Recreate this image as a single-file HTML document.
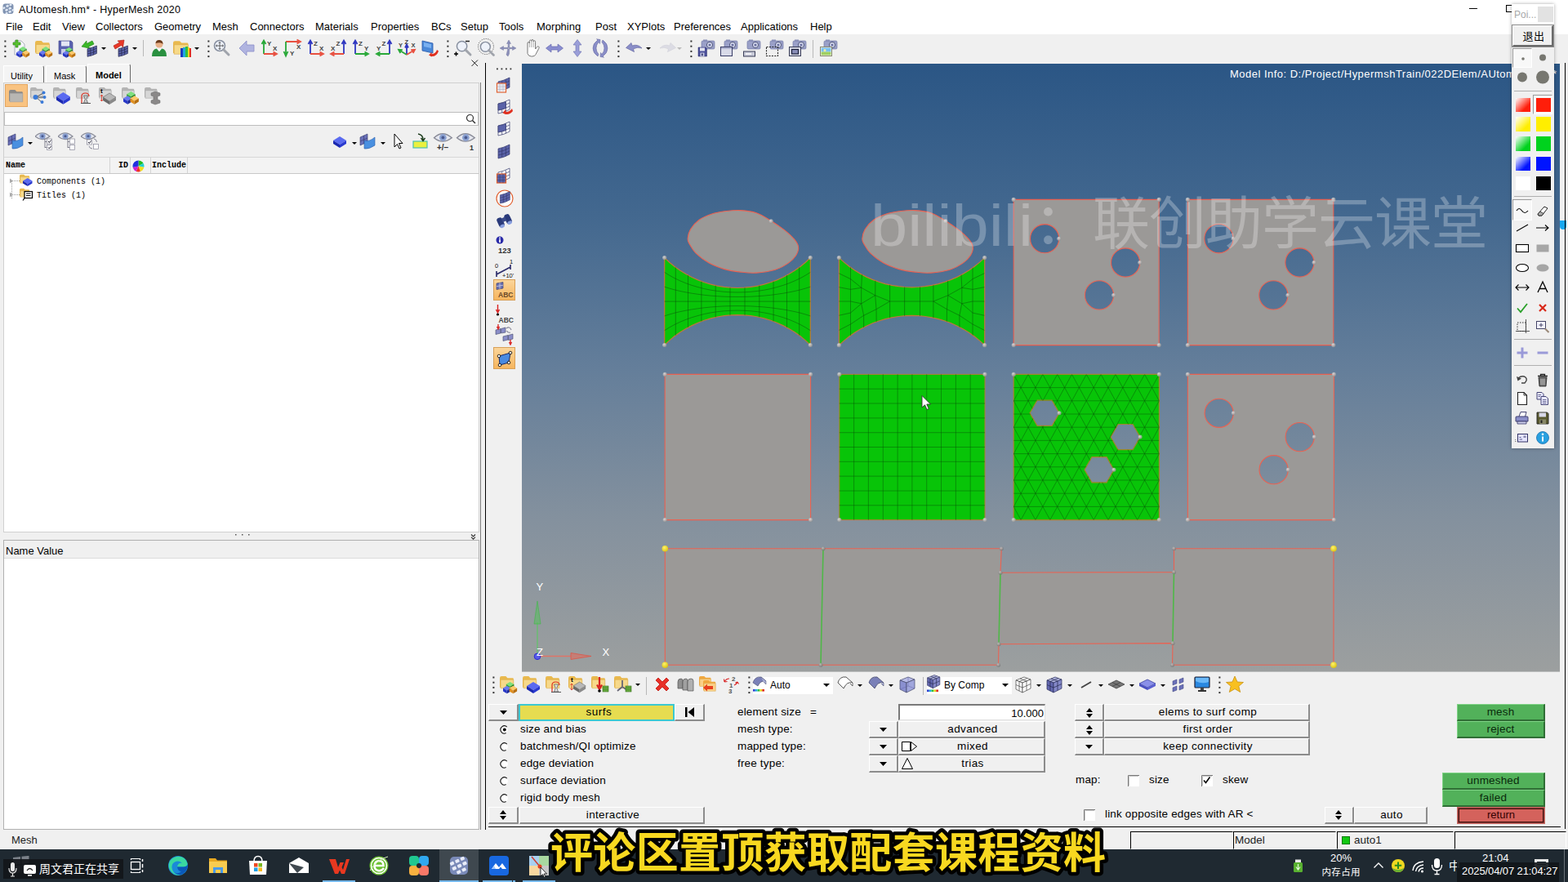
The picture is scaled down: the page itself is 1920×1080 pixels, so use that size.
<!DOCTYPE html>
<html><head><meta charset="utf-8"><title>HyperMesh</title>
<style>
html,body{margin:0;padding:0}
body{width:1920px;height:1080px;position:relative;overflow:hidden;background:#f0f0f0;font-family:"Liberation Sans",sans-serif;font-size:13px;color:#000}
div,svg{position:absolute;box-sizing:border-box}
.t{white-space:nowrap;line-height:1}
.btn{background:#f0f0f0;border-top:1px solid #fff;border-left:1px solid #fff;border-right:2px solid #8c8c8c;border-bottom:2px solid #8c8c8c;text-align:center;font-size:13.5px;letter-spacing:0.35px;line-height:17px;white-space:nowrap;padding-left:3px}
.gbtn{background:#52b15a;border-top:1px solid #7fd486;border-left:1px solid #7fd486;border-right:2px solid #2f6e35;border-bottom:2px solid #2f6e35;text-align:center;font-size:13.5px;letter-spacing:0.17px;line-height:17.5px;color:#0a2a0c;white-space:nowrap}
.mono{font-family:"Liberation Mono",monospace}
</style></head><body>
<div style="left:0px;top:0px;width:1920px;height:42px;background:#fff"></div>
<div style="left:0px;top:42px;width:1920px;height:36px;background:#f0f0f0"></div>
<div class="t" style="left:23px;top:6px;font-size:12.5px;color:#000;letter-spacing:0.27px">AUtomesh.hm* - HyperMesh 2020</div>
<div class="t" style="left:7px;top:26px;font-size:13px;color:#000;">File</div>
<div class="t" style="left:40px;top:26px;font-size:13px;color:#000;">Edit</div>
<div class="t" style="left:76px;top:26px;font-size:13px;color:#000;">View</div>
<div class="t" style="left:117px;top:26px;font-size:13px;color:#000;">Collectors</div>
<div class="t" style="left:189px;top:26px;font-size:13px;color:#000;">Geometry</div>
<div class="t" style="left:260px;top:26px;font-size:13px;color:#000;">Mesh</div>
<div class="t" style="left:306px;top:26px;font-size:13px;color:#000;">Connectors</div>
<div class="t" style="left:386px;top:26px;font-size:13px;color:#000;">Materials</div>
<div class="t" style="left:454px;top:26px;font-size:13px;color:#000;">Properties</div>
<div class="t" style="left:528px;top:26px;font-size:13px;color:#000;">BCs</div>
<div class="t" style="left:564px;top:26px;font-size:13px;color:#000;">Setup</div>
<div class="t" style="left:611px;top:26px;font-size:13px;color:#000;">Tools</div>
<div class="t" style="left:657px;top:26px;font-size:13px;color:#000;">Morphing</div>
<div class="t" style="left:729px;top:26px;font-size:13px;color:#000;">Post</div>
<div class="t" style="left:768px;top:26px;font-size:13px;color:#000;">XYPlots</div>
<div class="t" style="left:825px;top:26px;font-size:13px;color:#000;">Preferences</div>
<div class="t" style="left:907px;top:26px;font-size:13px;color:#000;">Applications</div>
<div class="t" style="left:992px;top:26px;font-size:13px;color:#000;">Help</div>
<div style="left:1799px;top:10px;width:10px;height:1px;background:#000"></div>
<div style="left:1844px;top:6px;width:9px;height:9px;border:1px solid #000"></div>
<div style="left:594px;top:77px;width:1px;height:939px;background:#000"></div>
<div style="left:4px;top:101px;width:583px;height:551px;background:#f0f0f0;border:1px solid #d0d0d0"></div>
<div style="left:588px;top:101px;width:1px;height:915px;background:#7c7c7c"></div>
<div style="left:5px;top:137px;width:581px;height:17px;background:#fff;border:1px solid #bdbdbd"></div>
<div style="left:5px;top:192px;width:581px;height:21px;background:#f3f3f3;border-top:1px solid #d8d8d8;border-bottom:1px solid #c8c8c8"></div>
<div style="left:5px;top:213px;width:581px;height:438px;background:#fff"></div>
<div style="left:4px;top:661px;width:583px;height:355px;background:#fff;border:1px solid #b0b0b0"></div>
<div style="left:5px;top:662px;width:581px;height:22px;background:#f0f0f0;border-bottom:1px solid #dcdcdc"></div>
<div class="t" style="left:7px;top:668px;font-size:13px;color:#000;">Name Value</div>
<div class="t" style="left:14px;top:1022px;font-size:13px;color:#222;">Mesh</div>
<svg style="left:639px;top:78px" width="1271" height="744.6" viewBox="639 78 1271 744.6"><defs>
<linearGradient id="bg" x1="0" y1="0" x2="0" y2="1">
<stop offset="0" stop-color="#2b5685"/><stop offset="0.25" stop-color="#43688f"/><stop offset="0.5" stop-color="#647e9a"/><stop offset="0.75" stop-color="#84919e"/><stop offset="1" stop-color="#9c9f9f"/>
</linearGradient>
<radialGradient id="nd" cx="0.4" cy="0.35" r="0.7"><stop offset="0" stop-color="#e8e8e8"/><stop offset="1" stop-color="#8c8c8c"/></radialGradient>
<radialGradient id="nd2" cx="0.4" cy="0.35" r="0.7"><stop offset="0" stop-color="#c4c4c4"/><stop offset="1" stop-color="#6c6c6c"/></radialGradient><radialGradient id="ny" cx="0.4" cy="0.35" r="0.7"><stop offset="0" stop-color="#fff46a"/><stop offset="1" stop-color="#d8c010"/></radialGradient>
</defs><rect x="639" y="78" width="1271" height="744.6" fill="url(#bg)"/><path d="M906.7 257.6C913.1 258.0 919.9 258.6 926.1 260.8C932.4 262.9 938.4 266.9 944.2 270.5C950.0 274.0 956.3 278.4 961.1 282.1C965.9 285.9 970.0 289.9 972.8 293.2C975.5 296.6 977.3 299.1 977.6 302.4C978.0 305.6 976.8 309.3 974.7 312.7C972.6 316.0 969.2 319.5 965.0 322.4C960.8 325.3 955.9 328.2 949.4 330.2C943.0 332.1 933.2 333.6 926.1 334.1C919.0 334.6 913.1 333.8 906.7 333.1C900.2 332.4 893.7 331.5 887.2 329.6C880.7 327.7 873.6 325.1 867.8 321.8C861.9 318.6 856.1 313.9 852.2 310.2C848.3 306.4 846.1 302.1 844.4 299.1C842.7 296.1 841.9 295.3 842.1 292.3C842.3 289.2 843.1 284.8 845.4 281.0C847.7 277.2 851.7 272.5 856.1 269.3C860.5 266.2 866.5 263.9 871.7 262.1C876.8 260.4 881.4 259.6 887.2 258.8C893.0 258.1 900.2 257.3 906.7 257.6Z" fill="#9b9997" stroke="#ea6252" stroke-width="1.1"/><path d="M1120.4 257.6C1126.8 258.0 1133.6 258.6 1139.8 260.8C1146.1 262.9 1152.1 266.9 1157.9 270.5C1163.7 274.0 1170.0 278.4 1174.8 282.1C1179.6 285.9 1183.7 289.9 1186.5 293.2C1189.2 296.6 1191.0 299.1 1191.3 302.4C1191.7 305.6 1190.5 309.3 1188.4 312.7C1186.3 316.0 1182.9 319.5 1178.7 322.4C1174.5 325.3 1169.6 328.2 1163.1 330.2C1156.7 332.1 1146.9 333.6 1139.8 334.1C1132.7 334.6 1126.8 333.8 1120.4 333.1C1113.9 332.4 1107.4 331.5 1100.9 329.6C1094.4 327.7 1087.3 325.1 1081.5 321.8C1075.6 318.6 1069.8 313.9 1065.9 310.2C1062.0 306.4 1059.8 302.1 1058.1 299.1C1056.4 296.1 1055.6 295.3 1055.8 292.3C1056.0 289.2 1056.8 284.8 1059.1 281.0C1061.4 277.2 1065.4 272.5 1069.8 269.3C1074.2 266.2 1080.2 263.9 1085.4 262.1C1090.5 260.4 1095.1 259.6 1100.9 258.8C1106.7 258.1 1113.9 257.3 1120.4 257.6Z" fill="#9b9997" stroke="#ea6252" stroke-width="1.1"/><path d="M813.7 315.6 L819.7 321.2 L826.1 326.5 L832.9 331.3 L839.9 335.6 L847.2 339.5 L854.7 342.9 L862.4 345.8 L870.3 348.2 L878.4 350.1 L886.5 351.4 L894.7 352.2 L903.0 352.5 L911.3 352.2 L919.5 351.4 L927.6 350.1 L935.7 348.2 L943.6 345.8 L951.3 342.9 L958.8 339.5 L966.1 335.6 L973.1 331.3 L979.9 326.5 L986.3 321.2 L992.3 315.6 L992.3 422.5 L986.3 416.9 L979.9 411.6 L973.1 406.8 L966.1 402.5 L958.8 398.6 L951.3 395.2 L943.6 392.3 L935.7 389.9 L927.6 388.0 L919.5 386.7 L911.3 385.9 L903.0 385.6 L894.7 385.9 L886.5 386.7 L878.4 388.0 L870.3 389.9 L862.4 392.3 L854.7 395.2 L847.2 398.6 L839.9 402.5 L832.9 406.8 L826.1 411.6 L819.7 416.9 L813.7 422.5Z" fill="#08c408" stroke="#c07838" stroke-width="1.2"/><path d="M827.3 327.4L827.3 410.7M842.5 337.1L842.5 401.0M858.9 344.6L858.9 393.5M876.2 349.6L876.2 388.5M894.0 352.2L894.0 385.9M912.0 352.2L912.0 385.9M929.8 349.6L929.8 388.5M947.1 344.6L947.1 393.5M963.5 337.1L963.5 401.0M978.7 327.4L978.7 410.7M813.7 333.4L819.7 337.2L826.1 340.7L832.9 343.9L839.9 346.8L847.2 349.4L854.7 351.6L862.4 353.6L870.3 355.2L878.4 356.4L886.5 357.3L894.7 357.8L903.0 358.0L911.3 357.8L919.5 357.3L927.6 356.4L935.7 355.2L943.6 353.6L951.3 351.6L958.8 349.4L966.1 346.8L973.1 343.9L979.9 340.7L986.3 337.2L992.3 333.4M813.7 351.2L819.7 353.1L826.1 354.9L832.9 356.5L839.9 357.9L847.2 359.2L854.7 360.3L862.4 361.3L870.3 362.1L878.4 362.7L886.5 363.2L894.7 363.4L903.0 363.5L911.3 363.4L919.5 363.2L927.6 362.7L935.7 362.1L943.6 361.3L951.3 360.3L958.8 359.2L966.1 357.9L973.1 356.5L979.9 354.9L986.3 353.1L992.3 351.2M813.7 369.1L819.7 369.1L826.1 369.1L832.9 369.1L839.9 369.1L847.2 369.1L854.7 369.1L862.4 369.1L870.3 369.1L878.4 369.1L886.5 369.1L894.7 369.1L903.0 369.1L911.3 369.1L919.5 369.1L927.6 369.1L935.7 369.1L943.6 369.1L951.3 369.1L958.8 369.1L966.1 369.1L973.1 369.1L979.9 369.1L986.3 369.1L992.3 369.1M813.7 386.9L819.7 385.0L826.1 383.2L832.9 381.6L839.9 380.2L847.2 378.9L854.7 377.8L862.4 376.8L870.3 376.0L878.4 375.4L886.5 374.9L894.7 374.7L903.0 374.6L911.3 374.7L919.5 374.9L927.6 375.4L935.7 376.0L943.6 376.8L951.3 377.8L958.8 378.9L966.1 380.2L973.1 381.6L979.9 383.2L986.3 385.0L992.3 386.9M813.7 404.7L819.7 400.9L826.1 397.4L832.9 394.2L839.9 391.3L847.2 388.7L854.7 386.5L862.4 384.5L870.3 382.9L878.4 381.7L886.5 380.8L894.7 380.3L903.0 380.1L911.3 380.3L919.5 380.8L927.6 381.7L935.7 382.9L943.6 384.5L951.3 386.5L958.8 388.7L966.1 391.3L973.1 394.2L979.9 397.4L986.3 400.9L992.3 404.7" fill="none" stroke="#0a500a" stroke-width="0.8" stroke-opacity="0.62"/><clipPath id="bt2"><path d="M1027.4 315.6 L1033.5 321.1 L1039.9 326.3 L1046.6 331.0 L1053.6 335.3 L1060.9 339.1 L1068.4 342.4 L1076.2 345.3 L1084.0 347.6 L1092.0 349.4 L1100.2 350.7 L1108.3 351.5 L1116.6 351.8 L1124.8 351.5 L1132.9 350.7 L1141.1 349.4 L1149.1 347.6 L1156.9 345.3 L1164.7 342.4 L1172.2 339.1 L1179.5 335.3 L1186.5 331.0 L1193.2 326.3 L1199.6 321.1 L1205.7 315.6 L1205.7 422.7 L1199.6 417.1 L1193.2 412.0 L1186.5 407.3 L1179.5 403.0 L1172.2 399.2 L1164.7 395.8 L1157.0 393.0 L1149.1 390.6 L1141.1 388.8 L1133.0 387.5 L1124.8 386.7 L1116.6 386.4 L1108.3 386.7 L1100.1 387.5 L1092.0 388.8 L1084.0 390.6 L1076.1 393.0 L1068.4 395.8 L1060.9 399.2 L1053.6 403.0 L1046.6 407.3 L1039.9 412.0 L1033.5 417.1 L1027.4 422.7Z"/></clipPath><path d="M1027.4 315.6 L1033.5 321.1 L1039.9 326.3 L1046.6 331.0 L1053.6 335.3 L1060.9 339.1 L1068.4 342.4 L1076.2 345.3 L1084.0 347.6 L1092.0 349.4 L1100.2 350.7 L1108.3 351.5 L1116.6 351.8 L1124.8 351.5 L1132.9 350.7 L1141.1 349.4 L1149.1 347.6 L1156.9 345.3 L1164.7 342.4 L1172.2 339.1 L1179.5 335.3 L1186.5 331.0 L1193.2 326.3 L1199.6 321.1 L1205.7 315.6 L1205.7 422.7 L1199.6 417.1 L1193.2 412.0 L1186.5 407.3 L1179.5 403.0 L1172.2 399.2 L1164.7 395.8 L1157.0 393.0 L1149.1 390.6 L1141.1 388.8 L1133.0 387.5 L1124.8 386.7 L1116.6 386.4 L1108.3 386.7 L1100.1 387.5 L1092.0 388.8 L1084.0 390.6 L1076.1 393.0 L1068.4 395.8 L1060.9 399.2 L1053.6 403.0 L1046.6 407.3 L1039.9 412.0 L1033.5 417.1 L1027.4 422.7Z" fill="#08c408" stroke="#c07838" stroke-width="1.2"/><path d="M1027.0 334.6L1041.5 341.6L1054.7 352.3L1071.7 361.7L1089.6 369.0M1205.5 334.6L1191.0 341.6L1177.8 352.3L1160.8 361.7L1142.9 369.0M1027.0 351.6L1041.5 354.4L1054.7 352.3M1205.5 351.6L1191.0 354.4L1177.8 352.3M1027.0 369.0L1041.5 369.0L1054.7 371.8L1071.7 361.7M1205.5 369.0L1191.0 369.0L1177.8 371.8L1160.8 361.7M1027.0 386.3L1041.5 383.1L1054.7 371.8M1205.5 386.3L1191.0 383.1L1177.8 371.8M1027.0 404.5L1041.5 397.0L1057.6 386.3L1073.0 378.7L1089.6 369.0M1205.5 404.5L1191.0 397.0L1174.9 386.3L1159.5 378.7L1142.9 369.0M1041.5 312.6L1041.5 425.9M1191.0 312.6L1191.0 425.9M1056.6 312.6L1054.7 352.3L1054.7 371.8L1057.6 386.3L1057.6 425.9M1175.9 312.6L1177.8 352.3L1177.8 371.8L1174.9 386.3L1174.9 425.9M1072.3 312.6L1071.7 361.7L1073.0 378.7L1073.6 425.9M1160.1 312.6L1160.8 361.7L1159.5 378.7L1158.9 425.9M1089.6 312.6L1089.6 425.9M1107.6 312.6L1107.6 425.9M1126.5 312.6L1126.5 425.9M1142.9 312.6L1142.9 425.9M1089.6 369.0L1142.9 369.0" fill="none" stroke="#0a500a" stroke-width="0.8" stroke-opacity="0.62" clip-path="url(#bt2)"/><path d="M1241.2 244.4H1419.2V422.6H1241.2ZM1261.5 292.2a17.6 17.6 0 1 0 35.2 0a17.6 17.6 0 1 0 -35.2 0ZM1360.5 321.5a17.6 17.6 0 1 0 35.2 0a17.6 17.6 0 1 0 -35.2 0ZM1328.4 361.4a17.6 17.6 0 1 0 35.2 0a17.6 17.6 0 1 0 -35.2 0Z" fill="#9b9997" fill-rule="evenodd" stroke="#ea6252" stroke-width="1.1"/><path d="M1454.4 244.4H1632.8V422.6H1454.4ZM1474.8 292.2a17.6 17.6 0 1 0 35.2 0a17.6 17.6 0 1 0 -35.2 0ZM1573.8 321.5a17.6 17.6 0 1 0 35.2 0a17.6 17.6 0 1 0 -35.2 0ZM1541.7 361.4a17.6 17.6 0 1 0 35.2 0a17.6 17.6 0 1 0 -35.2 0Z" fill="#9b9997" fill-rule="evenodd" stroke="#ea6252" stroke-width="1.1"/><path d="M814.2 458.4H992.6V636.6H814.2Z" fill="#9b9997" stroke="#ea6252" stroke-width="1.1"/><path d="M1027.8 458.4H1206V636.6H1027.8Z" fill="#08c408" stroke="#b08030" stroke-width="1"/><path d="M1045.6 458.4V636.6M1027.8 476.2H1206M1063.4 458.4V636.6M1027.8 494.0H1206M1081.3 458.4V636.6M1027.8 511.9H1206M1099.1 458.4V636.6M1027.8 529.7H1206M1116.9 458.4V636.6M1027.8 547.5H1206M1134.7 458.4V636.6M1027.8 565.3H1206M1152.5 458.4V636.6M1027.8 583.1H1206M1170.4 458.4V636.6M1027.8 601.0H1206M1188.2 458.4V636.6M1027.8 618.8H1206" fill="none" stroke="#0a500a" stroke-width="0.75" stroke-opacity="0.6"/><clipPath id="tm"><path d="M1241.2 458.4H1419.4V636.6H1241.2ZM1297.1 505.8L1288.1 521.4L1270.1 521.4L1261.1 505.8L1270.1 490.2L1288.1 490.2ZM1396.1 535.1L1387.1 550.7L1369.1 550.7L1360.1 535.1L1369.1 519.5L1387.1 519.5ZM1364.0 575.2L1355.0 590.8L1337.0 590.8L1328.0 575.2L1337.0 559.6L1355.0 559.6Z" clip-rule="evenodd"/></clipPath><path d="M1241.2 458.4H1419.4V636.6H1241.2ZM1297.1 505.8L1288.1 521.4L1270.1 521.4L1261.1 505.8L1270.1 490.2L1288.1 490.2ZM1396.1 535.1L1387.1 550.7L1369.1 550.7L1360.1 535.1L1369.1 519.5L1387.1 519.5ZM1364.0 575.2L1355.0 590.8L1337.0 590.8L1328.0 575.2L1337.0 559.6L1355.0 559.6Z" fill="#08c408" fill-rule="evenodd" stroke="#a08828" stroke-width="1.2"/><path d="M1241.2 474.6H1419.4M1241.2 490.8H1419.4M1241.2 507.0H1419.4M1241.2 523.2H1419.4M1241.2 539.4H1419.4M1241.2 555.6H1419.4M1241.2 571.8H1419.4M1241.2 588.0H1419.4M1241.2 604.2H1419.4M1241.2 620.4H1419.4M1045.2 458.4L1143.2 636.6M1045.2 458.4L947.2 636.6M1063.0 458.4L1161.0 636.6M1063.0 458.4L965.0 636.6M1080.8 458.4L1178.8 636.6M1080.8 458.4L982.8 636.6M1098.6 458.4L1196.7 636.6M1098.6 458.4L1000.6 636.6M1116.5 458.4L1214.5 636.6M1116.5 458.4L1018.5 636.6M1134.3 458.4L1232.3 636.6M1134.3 458.4L1036.3 636.6M1152.1 458.4L1250.1 636.6M1152.1 458.4L1054.1 636.6M1169.9 458.4L1267.9 636.6M1169.9 458.4L1071.9 636.6M1187.7 458.4L1285.8 636.6M1187.7 458.4L1089.7 636.6M1205.6 458.4L1303.6 636.6M1205.6 458.4L1107.5 636.6M1223.4 458.4L1321.4 636.6M1223.4 458.4L1125.4 636.6M1241.2 458.4L1339.2 636.6M1241.2 458.4L1143.2 636.6M1259.0 458.4L1357.0 636.6M1259.0 458.4L1161.0 636.6M1276.8 458.4L1374.9 636.6M1276.8 458.4L1178.8 636.6M1294.7 458.4L1392.7 636.6M1294.7 458.4L1196.7 636.6M1312.5 458.4L1410.5 636.6M1312.5 458.4L1214.5 636.6M1330.3 458.4L1428.3 636.6M1330.3 458.4L1232.3 636.6M1348.1 458.4L1446.1 636.6M1348.1 458.4L1250.1 636.6M1365.9 458.4L1464.0 636.6M1365.9 458.4L1267.9 636.6M1383.8 458.4L1481.8 636.6M1383.8 458.4L1285.8 636.6M1401.6 458.4L1499.6 636.6M1401.6 458.4L1303.6 636.6M1419.4 458.4L1517.4 636.6M1419.4 458.4L1321.4 636.6M1437.2 458.4L1535.2 636.6M1437.2 458.4L1339.2 636.6M1455.0 458.4L1553.0 636.6M1455.0 458.4L1357.0 636.6M1472.9 458.4L1570.9 636.6M1472.9 458.4L1374.9 636.6M1490.7 458.4L1588.7 636.6M1490.7 458.4L1392.7 636.6M1508.5 458.4L1606.5 636.6M1508.5 458.4L1410.5 636.6M1526.3 458.4L1624.3 636.6M1526.3 458.4L1428.3 636.6M1544.1 458.4L1642.2 636.6M1544.1 458.4L1446.1 636.6M1562.0 458.4L1660.0 636.6M1562.0 458.4L1464.0 636.6M1579.8 458.4L1677.8 636.6M1579.8 458.4L1481.8 636.6M1597.6 458.4L1695.6 636.6M1597.6 458.4L1499.6 636.6" fill="none" stroke="#0a500a" stroke-width="0.75" stroke-opacity="0.6" clip-path="url(#tm)"/><path d="M1454.4 458.4H1633.4V636.6H1454.4ZM1475.1 505.8a17.6 17.6 0 1 0 35.2 0a17.6 17.6 0 1 0 -35.2 0ZM1574.1 535.1a17.6 17.6 0 1 0 35.2 0a17.6 17.6 0 1 0 -35.2 0ZM1542.0 575.2a17.6 17.6 0 1 0 35.2 0a17.6 17.6 0 1 0 -35.2 0Z" fill="#9b9997" fill-rule="evenodd" stroke="#ea6252" stroke-width="1.1"/><path d="M814.3 671.8L1226.3 671.8L1225 701.2L1437.5 700.6L1437.5 671.8L1633 671.8L1633 814.2L1435.5 814.2L1436 787.6L1223 788.8L1222.5 814.2L814.3 814.2Z" fill="#9b9997" stroke="#ea6252" stroke-width="1.1"/><path d="M1008 671.8L1005 814.2M1225 701.2L1223 788.8M1437.5 700.6L1436 787.6" stroke="#4fb848" stroke-width="1.6" fill="none"/><circle cx="944.2" cy="270.9" r="2.6" fill="url(#nd)" fill-opacity="0.8"/><circle cx="1157.9" cy="270.9" r="2.6" fill="url(#nd)" fill-opacity="0.8"/><circle cx="813.7" cy="315.6" r="2.6" fill="url(#nd)" fill-opacity="0.8"/><circle cx="992.3" cy="315.6" r="2.6" fill="url(#nd)" fill-opacity="0.8"/><circle cx="813.7" cy="422.5" r="2.6" fill="url(#nd)" fill-opacity="0.8"/><circle cx="992.3" cy="422.5" r="2.6" fill="url(#nd)" fill-opacity="0.8"/><circle cx="1027.4" cy="315.6" r="2.6" fill="url(#nd)" fill-opacity="0.8"/><circle cx="1205.7" cy="315.6" r="2.6" fill="url(#nd)" fill-opacity="0.8"/><circle cx="1027.4" cy="422.7" r="2.6" fill="url(#nd)" fill-opacity="0.8"/><circle cx="1205.7" cy="422.7" r="2.6" fill="url(#nd)" fill-opacity="0.8"/><circle cx="1296.7" cy="292.2" r="2.5" fill="url(#nd)" fill-opacity="0.8"/><circle cx="1395.7" cy="321.5" r="2.5" fill="url(#nd)" fill-opacity="0.8"/><circle cx="1363.6" cy="361.4" r="2.5" fill="url(#nd)" fill-opacity="0.8"/><circle cx="1241.2" cy="244.4" r="2.6" fill="url(#nd)" fill-opacity="0.8"/><circle cx="1419.2" cy="244.4" r="2.6" fill="url(#nd)" fill-opacity="0.8"/><circle cx="1241.2" cy="422.6" r="2.6" fill="url(#nd)" fill-opacity="0.8"/><circle cx="1419.2" cy="422.6" r="2.6" fill="url(#nd)" fill-opacity="0.8"/><circle cx="1510.0" cy="292.2" r="2.5" fill="url(#nd)" fill-opacity="0.8"/><circle cx="1609.0" cy="321.5" r="2.5" fill="url(#nd)" fill-opacity="0.8"/><circle cx="1576.9" cy="361.4" r="2.5" fill="url(#nd)" fill-opacity="0.8"/><circle cx="1454.4" cy="244.4" r="2.6" fill="url(#nd)" fill-opacity="0.8"/><circle cx="1632.8" cy="244.4" r="2.6" fill="url(#nd)" fill-opacity="0.8"/><circle cx="1454.4" cy="422.6" r="2.6" fill="url(#nd)" fill-opacity="0.8"/><circle cx="1632.8" cy="422.6" r="2.6" fill="url(#nd)" fill-opacity="0.8"/><circle cx="814.2" cy="458.4" r="2.6" fill="url(#nd)" fill-opacity="0.8"/><circle cx="992.6" cy="458.4" r="2.6" fill="url(#nd)" fill-opacity="0.8"/><circle cx="814.2" cy="636.6" r="2.6" fill="url(#nd)" fill-opacity="0.8"/><circle cx="992.6" cy="636.6" r="2.6" fill="url(#nd)" fill-opacity="0.8"/><circle cx="1027.8" cy="458.4" r="2.6" fill="url(#nd)" fill-opacity="0.8"/><circle cx="1206.0" cy="458.4" r="2.6" fill="url(#nd)" fill-opacity="0.8"/><circle cx="1027.8" cy="636.6" r="2.6" fill="url(#nd)" fill-opacity="0.8"/><circle cx="1206.0" cy="636.6" r="2.6" fill="url(#nd)" fill-opacity="0.8"/><circle cx="1297.1" cy="505.8" r="2.5" fill="url(#nd)" fill-opacity="0.8"/><circle cx="1396.1" cy="535.1" r="2.5" fill="url(#nd)" fill-opacity="0.8"/><circle cx="1364.0" cy="575.2" r="2.5" fill="url(#nd)" fill-opacity="0.8"/><circle cx="1241.2" cy="458.4" r="2.6" fill="url(#nd)" fill-opacity="0.8"/><circle cx="1419.4" cy="458.4" r="2.6" fill="url(#nd)" fill-opacity="0.8"/><circle cx="1241.2" cy="636.6" r="2.6" fill="url(#nd)" fill-opacity="0.8"/><circle cx="1419.4" cy="636.6" r="2.6" fill="url(#nd)" fill-opacity="0.8"/><circle cx="1510.3" cy="505.8" r="2.5" fill="url(#nd)" fill-opacity="0.8"/><circle cx="1609.3" cy="535.1" r="2.5" fill="url(#nd)" fill-opacity="0.8"/><circle cx="1577.2" cy="575.2" r="2.5" fill="url(#nd)" fill-opacity="0.8"/><circle cx="1454.4" cy="458.4" r="2.6" fill="url(#nd)" fill-opacity="0.8"/><circle cx="1633.4" cy="458.4" r="2.6" fill="url(#nd)" fill-opacity="0.8"/><circle cx="1454.4" cy="636.6" r="2.6" fill="url(#nd)" fill-opacity="0.8"/><circle cx="1633.4" cy="636.6" r="2.6" fill="url(#nd)" fill-opacity="0.8"/><circle cx="1008.0" cy="671.8" r="2.5" fill="url(#nd2)" fill-opacity="0.8"/><circle cx="1005.0" cy="814.2" r="2.5" fill="url(#nd2)" fill-opacity="0.8"/><circle cx="1226.3" cy="671.8" r="2.5" fill="url(#nd2)" fill-opacity="0.8"/><circle cx="1222.5" cy="814.2" r="2.5" fill="url(#nd2)" fill-opacity="0.8"/><circle cx="1225.0" cy="701.2" r="2.5" fill="url(#nd2)" fill-opacity="0.8"/><circle cx="1223.0" cy="788.8" r="2.5" fill="url(#nd2)" fill-opacity="0.8"/><circle cx="1437.5" cy="700.6" r="2.5" fill="url(#nd2)" fill-opacity="0.8"/><circle cx="1436.0" cy="787.6" r="2.5" fill="url(#nd2)" fill-opacity="0.8"/><circle cx="1437.5" cy="671.8" r="2.5" fill="url(#nd2)" fill-opacity="0.8"/><circle cx="1435.5" cy="814.2" r="2.5" fill="url(#nd2)" fill-opacity="0.8"/><circle cx="814.3" cy="671.8" r="3.8" fill="url(#ny)"/><circle cx="814.3" cy="814.2" r="3.8" fill="url(#ny)"/><circle cx="1633.0" cy="671.8" r="3.8" fill="url(#ny)"/><circle cx="1633.0" cy="814.2" r="3.8" fill="url(#ny)"/><path d="M658 800V762" stroke="#5ac862" stroke-width="1.3" stroke-opacity="0.85"/><path d="M658 736L654 764H662Z" fill="#4fc456" fill-opacity="0.5" stroke="#44b84c" stroke-width="0.8" stroke-opacity="0.8"/><path d="M661 803.5H699" stroke="#f06a5a" stroke-width="1.3" stroke-opacity="0.8"/><path d="M724 803.5L699 799.5V807.5Z" fill="#f0604e" fill-opacity="0.5" stroke="#e84838" stroke-width="0.8" stroke-opacity="0.8"/><circle cx="658" cy="803.8" r="3.8" fill="#5a5ae8" stroke="#2a2ad0" stroke-width="1"/><g fill="#fff" font-family="Liberation Sans,sans-serif" font-size="13"><text x="656.5" y="723">Y</text><text x="657" y="803">Z</text><text x="737.5" y="803">X</text></g><text x="1506" y="95" fill="#fff" font-family="Liberation Sans,sans-serif" font-size="13" textLength="400" lengthAdjust="spacing">Model Info: D:/Project/HypermshTrain/022DElem/AUtomesh.hm*</text></svg>
<div style="left:0px;top:1040px;width:1920px;height:40px;background:#1f2931"></div>
<div class="btn" style="left:598px;top:862px;width:37px;height:21px;"></div>
<svg style="left:611.5px;top:870.0px" width="9" height="5"><path d="M0 0H9L4.5 5Z" fill="#000"/></svg>
<div style="left:635px;top:862px;width:191px;height:21px;background:#e6dc50;border:2px solid #3cc8d0;text-align:center;font-size:13.5px;letter-spacing:0.5px;padding-left:6px;line-height:16px">surfs</div>
<div class="btn" style="left:826px;top:862px;width:37px;height:21px;"></div>
<svg style="left:838px;top:866px" width="13" height="12"><path d="M1 0H3.5V12H1ZM12 0V12L4.5 6Z" fill="#000"/></svg>
<div class="t" style="left:637px;top:886px;font-size:13.5px;color:#000;letter-spacing:0.17px">size and bias</div>
<svg style="left:611px;top:887px" width="13" height="13"><circle cx="6.5" cy="6.5" r="4.4" fill="#fff"/><path d="M9.8 3.2A4.6 4.6 0 1 0 8.6 10.6" fill="none" stroke="#111" stroke-width="1.1"/><circle cx="6.8" cy="6.5" r="1.9" fill="#000"/></svg>
<div class="t" style="left:637px;top:907px;font-size:13.5px;color:#000;letter-spacing:0.17px">batchmesh/QI optimize</div>
<svg style="left:611px;top:908px" width="13" height="13"><circle cx="6.5" cy="6.5" r="4.4" fill="#fff"/><path d="M9.8 3.2A4.6 4.6 0 1 0 8.6 10.6" fill="none" stroke="#111" stroke-width="1.1"/></svg>
<div class="t" style="left:637px;top:928px;font-size:13.5px;color:#000;letter-spacing:0.17px">edge deviation</div>
<svg style="left:611px;top:929px" width="13" height="13"><circle cx="6.5" cy="6.5" r="4.4" fill="#fff"/><path d="M9.8 3.2A4.6 4.6 0 1 0 8.6 10.6" fill="none" stroke="#111" stroke-width="1.1"/></svg>
<div class="t" style="left:637px;top:949px;font-size:13.5px;color:#000;letter-spacing:0.17px">surface deviation</div>
<svg style="left:611px;top:950px" width="13" height="13"><circle cx="6.5" cy="6.5" r="4.4" fill="#fff"/><path d="M9.8 3.2A4.6 4.6 0 1 0 8.6 10.6" fill="none" stroke="#111" stroke-width="1.1"/></svg>
<div class="t" style="left:637px;top:970px;font-size:13.5px;color:#000;letter-spacing:0.17px">rigid body mesh</div>
<svg style="left:611px;top:971px" width="13" height="13"><circle cx="6.5" cy="6.5" r="4.4" fill="#fff"/><path d="M9.8 3.2A4.6 4.6 0 1 0 8.6 10.6" fill="none" stroke="#111" stroke-width="1.1"/></svg>
<div class="btn" style="left:598px;top:988px;width:37px;height:21px;"></div>
<svg style="left:612px;top:992px" width="8" height="12"><path d="M0 5L4 0L8 5ZM0 7L4 12L8 7Z" fill="#000"/></svg>
<div class="btn" style="left:636px;top:988px;width:227px;height:21px;">interactive</div>
<div class="t" style="left:903px;top:865px;font-size:13.5px;color:#000;letter-spacing:0.17px">element size</div>
<div class="t" style="left:903px;top:886px;font-size:13.5px;color:#000;letter-spacing:0.17px">mesh type:</div>
<div class="t" style="left:903px;top:907px;font-size:13.5px;color:#000;letter-spacing:0.17px">mapped type:</div>
<div class="t" style="left:903px;top:928px;font-size:13.5px;color:#000;letter-spacing:0.17px">free type:</div>
<div class="t" style="left:992px;top:865px;font-size:13.5px;color:#000;letter-spacing:0.17px">=</div>
<div style="left:1100px;top:862px;width:180px;height:20px;background:#fff;border-top:2px solid #7a7a7a;border-left:2px solid #7a7a7a;border-right:1px solid #e0e0e0;border-bottom:1px solid #e0e0e0;text-align:right;font-size:13px;line-height:19px;padding-right:1px">10.000</div>
<div class="btn" style="left:1064px;top:883px;width:36px;height:21px;"></div>
<svg style="left:1077.0px;top:891.0px" width="9" height="5"><path d="M0 0H9L4.5 5Z" fill="#000"/></svg>
<div class="btn" style="left:1100px;top:883px;width:180px;height:21px;">advanced</div>
<div class="btn" style="left:1064px;top:904px;width:36px;height:21px;"></div>
<svg style="left:1077.0px;top:912.0px" width="9" height="5"><path d="M0 0H9L4.5 5Z" fill="#000"/></svg>
<div class="btn" style="left:1100px;top:904px;width:180px;height:21px;">mixed</div>
<div class="btn" style="left:1064px;top:925px;width:36px;height:21px;"></div>
<svg style="left:1077.0px;top:933.0px" width="9" height="5"><path d="M0 0H9L4.5 5Z" fill="#000"/></svg>
<div class="btn" style="left:1100px;top:925px;width:180px;height:21px;">trias</div>
<svg style="left:1103px;top:907px" width="22" height="14"><path d="M1.5 1.5H11.5V12.5H1.5ZM12.5 1.5L19.5 7L12.5 12.5Z" fill="#fff" stroke="#000" stroke-width="1"/></svg>
<svg style="left:1103px;top:927px" width="18" height="16"><path d="M8 1.5L14.5 14.5H1.5Z" fill="#fff" stroke="#000" stroke-width="1"/></svg>
<div class="btn" style="left:1316px;top:862px;width:36px;height:21px;"></div>
<svg style="left:1329.5px;top:866.5px" width="8" height="12"><path d="M0 5L4 0L8 5ZM0 7L4 12L8 7Z" fill="#000"/></svg>
<div class="btn" style="left:1352px;top:862px;width:252px;height:21px;">elems to surf comp</div>
<div class="btn" style="left:1316px;top:883px;width:36px;height:21px;"></div>
<svg style="left:1329.5px;top:887.5px" width="8" height="12"><path d="M0 5L4 0L8 5ZM0 7L4 12L8 7Z" fill="#000"/></svg>
<div class="btn" style="left:1352px;top:883px;width:252px;height:21px;">first order</div>
<div class="btn" style="left:1316px;top:904px;width:36px;height:21px;"></div>
<svg style="left:1329.0px;top:912.0px" width="9" height="5"><path d="M0 0H9L4.5 5Z" fill="#000"/></svg>
<div class="btn" style="left:1352px;top:904px;width:252px;height:21px;">keep connectivity</div>
<div class="t" style="left:1317px;top:948px;font-size:13.5px;color:#000;letter-spacing:0.17px">map:</div>
<svg style="left:1381px;top:949px" width="14" height="14"><rect x="0" y="0" width="14" height="14" fill="#fff"/><path d="M0.5 14V0.5H14" fill="none" stroke="#7a7a7a" stroke-width="1"/><path d="M1.5 13V1.5H13" fill="none" stroke="#c8c8c8" stroke-width="1"/></svg>
<div class="t" style="left:1407px;top:948px;font-size:13.5px;color:#000;letter-spacing:0.17px">size</div>
<svg style="left:1471px;top:949px" width="14" height="14"><rect x="0" y="0" width="14" height="14" fill="#fff"/><path d="M0.5 14V0.5H14" fill="none" stroke="#7a7a7a" stroke-width="1"/><path d="M1.5 13V1.5H13" fill="none" stroke="#c8c8c8" stroke-width="1"/><path d="M3 6.5L5.5 9.5L10.5 2.5" fill="none" stroke="#000" stroke-width="1.6"/></svg>
<div class="t" style="left:1497px;top:948px;font-size:13.5px;color:#000;letter-spacing:0.17px">skew</div>
<svg style="left:1327px;top:991px" width="14" height="14"><rect x="0" y="0" width="14" height="14" fill="#fff"/><path d="M0.5 14V0.5H14" fill="none" stroke="#7a7a7a" stroke-width="1"/><path d="M1.5 13V1.5H13" fill="none" stroke="#c8c8c8" stroke-width="1"/></svg>
<div class="t" style="left:1353px;top:990px;font-size:13.5px;color:#000;letter-spacing:0.17px">link opposite edges with AR &lt;</div>
<div class="btn" style="left:1622px;top:988px;width:36px;height:21px;"></div>
<svg style="left:1635px;top:992px" width="8" height="12"><path d="M0 5L4 0L8 5ZM0 7L4 12L8 7Z" fill="#000"/></svg>
<div class="btn" style="left:1658px;top:988px;width:90px;height:21px;">auto</div>
<div class="gbtn" style="left:1784px;top:862px;width:108px;height:21px;">mesh</div>
<div class="gbtn" style="left:1784px;top:883px;width:108px;height:21px;">reject</div>
<div class="gbtn" style="left:1766px;top:946px;width:126px;height:21px;">unmeshed</div>
<div class="gbtn" style="left:1766px;top:967px;width:126px;height:21px;">failed</div>
<div style="left:1784px;top:988px;width:108px;height:21px;background:#8a3a36;border:1px solid #c86a64"><div style="left:1px;top:1px;width:104px;height:17px;background:#d4625c;border:1px solid #401210;text-align:center;font-size:13px;line-height:14px;color:#300">return</div></div>
<div style="left:598px;top:1012px;width:1313px;height:1px;background:#000"></div>
<div style="left:1384px;top:1018px;width:126px;height:22px;border-top:1.5px solid #000;border-left:1.5px solid #000;border-right:1px solid #fff;border-bottom:1px solid #fff;background:#f0f0f0"></div>
<div style="left:1510px;top:1018px;width:126px;height:22px;border-top:1.5px solid #000;border-left:1.5px solid #000;border-right:1px solid #fff;border-bottom:1px solid #fff;background:#f0f0f0"><div class="t" style="left:1px;top:3px;font-size:13.5px;color:#222">Model</div></div>
<div style="left:1637px;top:1018px;width:143px;height:22px;border-top:1.5px solid #000;border-left:1.5px solid #000;border-right:1px solid #fff;border-bottom:1px solid #fff;background:#f0f0f0"><div style="left:5px;top:5px;width:10px;height:10px;background:#12c812;border:1px solid #0a7a0a"></div><div class="t" style="left:20px;top:3px;font-size:13.5px;color:#222">auto1</div></div>
<div style="left:1781px;top:1018px;width:137px;height:22px;border-top:1.5px solid #000;border-left:1.5px solid #000;border-right:1px solid #fff;border-bottom:1px solid #fff;background:#f0f0f0"></div>
<svg style="left:5px;top:49px" width="3" height="22"><rect x="0.4" y="0.5" width="2" height="2" fill="#333"/><rect x="0.4" y="6.7" width="2" height="2" fill="#333"/><rect x="0.4" y="12.9" width="2" height="2" fill="#333"/><rect x="0.4" y="19.1" width="2" height="2" fill="#333"/></svg>
<svg style="left:13px;top:47px" width="24" height="24" viewBox="0 0 24 24"><path d="M5 3H13L17 7V20H5Z" fill="#f4f6fa" stroke="#9aa0b0" stroke-width="0.8"/><path d="M3 5H6V2H9V5H12V8H9V11H6V8H3Z" fill="#58c030" stroke="#2a8010" stroke-width="0.6"/><g transform="translate(7 10) scale(0.9)"><g transform="translate(4 0) scale(1)"><path d="M0 3L5 0L10 3L5 6Z" fill="#7ee07e"/><path d="M0 3L5 6V10L0 7Z" fill="#2fa02f"/><path d="M10 3L5 6V10L10 7Z" fill="#1f7f1f"/></g><g transform="translate(0 5) scale(1)"><path d="M0 3L5 0L10 3L5 6Z" fill="#6a7af0"/><path d="M0 3L5 6V10L0 7Z" fill="#2838c8"/><path d="M10 3L5 6V10L10 7Z" fill="#1a289a"/></g><g transform="translate(8 5) scale(1)"><path d="M0 3L5 0L10 3L5 6Z" fill="#ffc96a"/><path d="M0 3L5 6V10L0 7Z" fill="#e09020"/><path d="M10 3L5 6V10L10 7Z" fill="#b87010"/></g></g></svg>
<svg style="left:41px;top:47px" width="24" height="24" viewBox="0 0 24 24"><g transform="translate(2 2) scale(1.1)"><path d="M0 3Q0 1 2 1H7L9 3H15Q16 3 16 4V14H0Z" fill="#e9b94e"/><path d="M1 5H16V15H1Z" fill="#f7d98a" stroke="#d9a848" stroke-width="0.5"/></g><g transform="translate(7 10) scale(0.9)"><g transform="translate(4 0) scale(1)"><path d="M0 3L5 0L10 3L5 6Z" fill="#7ee07e"/><path d="M0 3L5 6V10L0 7Z" fill="#2fa02f"/><path d="M10 3L5 6V10L10 7Z" fill="#1f7f1f"/></g><g transform="translate(0 5) scale(1)"><path d="M0 3L5 0L10 3L5 6Z" fill="#6a7af0"/><path d="M0 3L5 6V10L0 7Z" fill="#2838c8"/><path d="M10 3L5 6V10L10 7Z" fill="#1a289a"/></g><g transform="translate(8 5) scale(1)"><path d="M0 3L5 0L10 3L5 6Z" fill="#ffc96a"/><path d="M0 3L5 6V10L0 7Z" fill="#e09020"/><path d="M10 3L5 6V10L10 7Z" fill="#b87010"/></g></g></svg>
<svg style="left:69px;top:47px" width="24" height="24" viewBox="0 0 24 24"><path d="M3 3H18L20 5V19H3Z" fill="#5a62b0" stroke="#3a4088" stroke-width="0.6"/><rect x="6" y="3.5" width="10" height="6" fill="#e4e6f4"/><rect x="6" y="13" width="9" height="6" fill="#c8cce8"/><g transform="translate(8 11) scale(0.85)"><g transform="translate(4 0) scale(1)"><path d="M0 3L5 0L10 3L5 6Z" fill="#7ee07e"/><path d="M0 3L5 6V10L0 7Z" fill="#2fa02f"/><path d="M10 3L5 6V10L10 7Z" fill="#1f7f1f"/></g><g transform="translate(0 5) scale(1)"><path d="M0 3L5 0L10 3L5 6Z" fill="#6a7af0"/><path d="M0 3L5 6V10L0 7Z" fill="#2838c8"/><path d="M10 3L5 6V10L10 7Z" fill="#1a289a"/></g><g transform="translate(8 5) scale(1)"><path d="M0 3L5 0L10 3L5 6Z" fill="#ffc96a"/><path d="M0 3L5 6V10L0 7Z" fill="#e09020"/><path d="M10 3L5 6V10L10 7Z" fill="#b87010"/></g></g></svg>
<svg style="left:97px;top:47px" width="24" height="24" viewBox="0 0 24 24"><path d="M3 9L9 2L9 5.5L16 2L18 6L11 9.5L14 11.5Z" fill="#3cb828" stroke="#1a8010" stroke-width="0.6" transform="translate(0 1)"/><g transform="translate(10 9) scale(0.95)"><path d="M0 4Q5 3 12 0V10Q6 13 0 14Z" fill="#5a62a8"/><path d="M0 4Q5 3 12 0V10Q6 13 0 14ZM4 3.2V13M8 2V11.8M0 7.3Q6 6.3 12 3.3M0 10.6Q6 9.6 12 6.6" fill="none" stroke="#22264a" stroke-width="0.7"/></g></svg>
<svg style="left:124px;top:57.5px" width="6" height="3"><path d="M0 0H6L3 3Z" fill="#000"/></svg>
<svg style="left:135px;top:47px" width="24" height="24" viewBox="0 0 24 24"><path d="M17 2L9 3L11.5 5L4 9L6 13L13.5 8.5L15.5 11Z" fill="#e83828" stroke="#a81810" stroke-width="0.6"/><g transform="translate(10 9) scale(0.95)"><path d="M0 4Q5 3 12 0V10Q6 13 0 14Z" fill="#5a62a8"/><path d="M0 4Q5 3 12 0V10Q6 13 0 14ZM4 3.2V13M8 2V11.8M0 7.3Q6 6.3 12 3.3M0 10.6Q6 9.6 12 6.6" fill="none" stroke="#22264a" stroke-width="0.7"/></g></svg>
<svg style="left:162px;top:57.5px" width="6" height="3"><path d="M0 0H6L3 3Z" fill="#000"/></svg>
<div style="left:175px;top:49px;width:1px;height:20px;background:#b8b8b8"></div>
<svg style="left:183px;top:47px" width="24" height="24" viewBox="0 0 24 24"><circle cx="12" cy="7" r="4.6" fill="#e8b088"/><path d="M7.5 6Q8 1.5 12.5 2Q16.5 2.5 16.5 7Q14 4 7.5 6Z" fill="#6a3a1a"/><path d="M3 22Q3 13 9 12.5L12 16L15 12.5Q21 13 21 22Z" fill="#2a9040"/><path d="M9 12.5L12 16L15 12.5L12 13.5Z" fill="#fff"/></svg>
<svg style="left:211px;top:47px" width="24" height="24" viewBox="0 0 24 24"><g transform="translate(1 2) scale(1.15)"><path d="M0 3Q0 1 2 1H7L9 3H15Q16 3 16 4V14H0Z" fill="#e9b94e"/><path d="M1 5H16V15H1Z" fill="#f7d98a" stroke="#d9a848" stroke-width="0.5"/></g><g transform="translate(10 10)"><rect x="0" y="2" width="3" height="11" fill="#1a3ac0"/><rect x="3" y="1" width="3" height="12" fill="#20a8e0"/><rect x="6" y="0" width="3" height="13" fill="#30c040"/><rect x="9" y="1" width="2" height="12" fill="#f0d020"/><rect x="11" y="2" width="2" height="11" fill="#e03020"/></g></svg>
<svg style="left:238px;top:57.5px" width="6" height="3"><path d="M0 0H6L3 3Z" fill="#000"/></svg>
<svg style="left:253.5px;top:49px" width="3" height="22"><rect x="0.4" y="0.5" width="2" height="2" fill="#333"/><rect x="0.4" y="6.7" width="2" height="2" fill="#333"/><rect x="0.4" y="12.9" width="2" height="2" fill="#333"/><rect x="0.4" y="19.1" width="2" height="2" fill="#333"/></svg>
<svg style="left:260px;top:47px" width="24" height="24" viewBox="0 0 24 24"><g transform="translate(1 1) scale(1.0)"><circle cx="8" cy="8" r="6.5" fill="#eef2fa" stroke="#8890a0" stroke-width="1.6"/><path d="M12.5 12.5L19 19" stroke="#a0a4ac" stroke-width="3" stroke-linecap="round"/></g><path d="M9 4.5V13.5M4.5 9H13.5M9 4.5L7.7 6M9 4.5L10.3 6M9 13.5L7.7 12M9 13.5L10.3 12M4.5 9L6 7.7M4.5 9L6 10.3M13.5 9L12 7.7M13.5 9L12 10.3" stroke="#444" stroke-width="0.8" fill="none"/></svg>
<svg style="left:290px;top:47px" width="24" height="24" viewBox="0 0 24 24"><path d="M3 12L12 3V8H21V16H12V21Z" fill="#b0b4e0" stroke="#8a8ec8" stroke-width="0.8"/></svg>
<svg style="left:318px;top:47px" width="24" height="24" viewBox="0 0 24 24"><path d="M5 19V4M2.5 7L5 2.5L7.5 7" stroke="#28a838" stroke-width="1.8" fill="none"/><path d="M5 19H19M16.5 16.5L21 19L16.5 21.5" stroke="#e85040" stroke-width="1.8" fill="none"/><text x="9" y="9" font-size="8" font-weight="bold" font-family="Liberation Sans,sans-serif" fill="#444">Y</text><text x="16" y="15" font-size="8" font-weight="bold" font-family="Liberation Sans,sans-serif" fill="#444">X</text></svg>
<svg style="left:346px;top:47px" width="24" height="24" viewBox="0 0 24 24"><path d="M4 4H20M17.5 1.5L22 4L17.5 6.5" stroke="#e85040" stroke-width="1.8" fill="none"/><path d="M4 4V19M1.5 16L4 21.5L6.5 16" stroke="#28a838" stroke-width="1.8" fill="none"/><text x="9" y="21" font-size="8" font-weight="bold" font-family="Liberation Sans,sans-serif" fill="#444">Y</text><text x="17" y="13" font-size="8" font-weight="bold" font-family="Liberation Sans,sans-serif" fill="#444">X</text></svg>
<svg style="left:374.5px;top:47px" width="24" height="24" viewBox="0 0 24 24"><path d="M5 19V4M2.5 7L5 2.5L7.5 7" stroke="#3038c0" stroke-width="1.8" fill="none"/><path d="M5 19H19M16.5 16.5L21 19L16.5 21.5" stroke="#e85040" stroke-width="1.8" fill="none"/><text x="9" y="9" font-size="8" font-weight="bold" font-family="Liberation Sans,sans-serif" fill="#444">Z</text><text x="16" y="15" font-size="8" font-weight="bold" font-family="Liberation Sans,sans-serif" fill="#444">X</text></svg>
<svg style="left:402px;top:47px" width="24" height="24" viewBox="0 0 24 24"><path d="M19 19V4M16.5 7L19 2.5L21.5 7" stroke="#3038c0" stroke-width="1.8" fill="none"/><path d="M19 19H5M7.5 16.5L3 19L7.5 21.5" stroke="#e85040" stroke-width="1.8" fill="none"/><text x="9.5" y="9" font-size="8" font-weight="bold" font-family="Liberation Sans,sans-serif" fill="#444">Z</text><text x="3" y="15" font-size="8" font-weight="bold" font-family="Liberation Sans,sans-serif" fill="#444">X</text></svg>
<svg style="left:430px;top:47px" width="24" height="24" viewBox="0 0 24 24"><path d="M5 19V4M2.5 7L5 2.5L7.5 7" stroke="#3038c0" stroke-width="1.8" fill="none"/><path d="M5 19H19M16.5 16.5L21 19L16.5 21.5" stroke="#28a838" stroke-width="1.8" fill="none"/><text x="9" y="9" font-size="8" font-weight="bold" font-family="Liberation Sans,sans-serif" fill="#444">Z</text><text x="16" y="15" font-size="8" font-weight="bold" font-family="Liberation Sans,sans-serif" fill="#444">Y</text></svg>
<svg style="left:458px;top:47px" width="24" height="24" viewBox="0 0 24 24"><path d="M19 19V4M16.5 7L19 2.5L21.5 7" stroke="#3038c0" stroke-width="1.8" fill="none"/><path d="M19 19H5M7.5 16.5L3 19L7.5 21.5" stroke="#28a838" stroke-width="1.8" fill="none"/><text x="9.5" y="9" font-size="8" font-weight="bold" font-family="Liberation Sans,sans-serif" fill="#444">Z</text><text x="3" y="15" font-size="8" font-weight="bold" font-family="Liberation Sans,sans-serif" fill="#444">Y</text></svg>
<svg style="left:486px;top:47px" width="24" height="24" viewBox="0 0 24 24"><path d="M12 20V9M10 11.5L12 7.5L14 11.5" stroke="#3038c0" stroke-width="1.8" fill="none"/><path d="M12 20L3 14.5M6.8 14.2L2 13.8L4.3 18" stroke="#28a838" stroke-width="1.8" fill="none"/><path d="M12 20L21 14.5M17.2 14.2L22 13.8L19.7 18" stroke="#e85040" stroke-width="1.8" fill="none"/><g font-size="7.5" font-weight="bold" font-family="Liberation Sans,sans-serif" fill="#444"><text x="2" y="11">Y</text><text x="9.5" y="6.5">Z</text><text x="17.5" y="11">X</text></g></svg>
<svg style="left:514px;top:47px" width="24" height="24" viewBox="0 0 24 24"><path d="M3 3L16 6V18L3 15Z" fill="#4a88d8" stroke="#2a58a8" stroke-width="0.8"/><path d="M5 5L14 7.3V12L5 10Z" fill="#7ab0f0"/><path d="M13 19Q19 20 21 14L23 15.5Q21 23 13 22Z" fill="#e03020"/><path d="M14.5 17L11 20.5L15 22.5Z" fill="#e03020"/></svg>
<svg style="left:547px;top:49px" width="3" height="22"><rect x="0.4" y="0.5" width="2" height="2" fill="#333"/><rect x="0.4" y="6.7" width="2" height="2" fill="#333"/><rect x="0.4" y="12.9" width="2" height="2" fill="#333"/><rect x="0.4" y="19.1" width="2" height="2" fill="#333"/></svg>
<svg style="left:554.5px;top:47px" width="24" height="24" viewBox="0 0 24 24"><g transform="translate(3 2) scale(0.95)"><circle cx="8" cy="8" r="6.5" fill="#eef2fa" stroke="#8890a0" stroke-width="1.6"/><path d="M12.5 12.5L19 19" stroke="#a0a4ac" stroke-width="3" stroke-linecap="round"/></g><path d="M15 3.5H20" stroke="#222" stroke-width="1.5"/><path d="M1 19H6M3.5 16.5V21.5" stroke="#000" stroke-width="1.5"/></svg>
<svg style="left:583px;top:47px" width="24" height="24" viewBox="0 0 24 24"><circle cx="12" cy="10" r="9.5" fill="none" stroke="#333" stroke-width="1" stroke-dasharray="1 1.6"/><g transform="translate(4 3) scale(0.92)"><circle cx="8" cy="8" r="6.5" fill="#eef2fa" stroke="#8890a0" stroke-width="1.6"/><path d="M12.5 12.5L19 19" stroke="#a0a4ac" stroke-width="3" stroke-linecap="round"/></g></svg>
<svg style="left:610px;top:47px" width="24" height="24" viewBox="0 0 24 24"><path d="M13 2L10.5 6.5H12.2Q12.5 12 10 20L12 22L13.5 19Q14 12 13.8 6.5H15.5ZM2 12L6.5 9.5V11.3H17.5V9.5L22 12L17.5 14.5V12.7H6.5V14.5Z" fill="#8a8eb8" stroke="#6a6e9a" stroke-width="0.4"/></svg>
<svg style="left:640px;top:47px" width="24" height="24" viewBox="0 0 24 24"><path d="M6 12V6Q6 4.5 7.2 4.5Q8.4 4.5 8.4 6V3.5Q8.4 2 9.6 2Q10.8 2 10.8 3.5V3Q10.8 1.5 12 1.5Q13.2 1.5 13.2 3V4Q13.2 2.8 14.4 2.8Q15.6 2.8 15.6 4.3V13L17.5 10.5Q18.6 9.3 19.8 10.2Q20.6 11 19.8 12.3L16 19.5Q15 22 12 22H10.5Q7 22 6 18.5Z" fill="#fff" stroke="#777" stroke-width="1"/><path d="M8.4 6V11M10.8 3.5V11M13.2 4V11" stroke="#999" stroke-width="0.8"/></svg>
<svg style="left:667px;top:47px" width="24" height="24" viewBox="0 0 24 24"><path d="M1.5 12L8 7V10H16V7L22.5 12L16 17V14H8V17Z" fill="#8a8ed0" stroke="#5a5ea8" stroke-width="0.6"/></svg>
<svg style="left:694.5px;top:47px" width="24" height="24" viewBox="0 0 24 24"><path d="M12 1.5L17 8H14V16H17L12 22.5L7 16H10V8H7Z" fill="#9a9ed8" stroke="#6a6eb0" stroke-width="0.6"/></svg>
<svg style="left:723px;top:47px" width="24" height="24" viewBox="0 0 24 24"><path d="M9 2Q3 6 3 12Q3 18 9 22L10 19.5Q7 16 7 12Q7 8 10 4.5L11.5 6.5L12 1.5L7.5 0.8Z" fill="#8a8ec8" stroke="#5a5e9a" stroke-width="0.5"/><path d="M15 22Q21 18 21 12Q21 6 15 2L14 4.5Q17 8 17 12Q17 16 14 19.5L12.5 17.5L12 22.5L16.5 23.2Z" fill="#8a8ec8" stroke="#5a5e9a" stroke-width="0.5"/></svg>
<svg style="left:756px;top:49px" width="3" height="22"><rect x="0.4" y="0.5" width="2" height="2" fill="#333"/><rect x="0.4" y="6.7" width="2" height="2" fill="#333"/><rect x="0.4" y="12.9" width="2" height="2" fill="#333"/><rect x="0.4" y="19.1" width="2" height="2" fill="#333"/></svg>
<svg style="left:764px;top:47px" width="24" height="24" viewBox="0 0 24 24"><path d="M2.5 11.5L9 5.5L10 9Q17 6.5 22 12Q16 10 11.5 13L12.5 16.5Z" fill="#8a8ec8" stroke="#5a5e9a" stroke-width="0.6"/></svg>
<svg style="left:791px;top:57.5px" width="6" height="3"><path d="M0 0H6L3 3Z" fill="#000"/></svg>
<svg style="left:806px;top:47px" width="24" height="24" viewBox="0 0 24 24"><g transform="translate(24 0) scale(-1 1)"><path d="M2.5 11.5L9 5.5L10 9Q17 6.5 22 12Q16 10 11.5 13L12.5 16.5Z" fill="#dcdce4" stroke="#d0d0d8" stroke-width="0.6"/></g></svg>
<svg style="left:829px;top:57.5px" width="6" height="3"><path d="M0 0H6L3 3Z" fill="#bbb"/></svg>
<svg style="left:845px;top:49px" width="3" height="22"><rect x="0.4" y="0.5" width="2" height="2" fill="#333"/><rect x="0.4" y="6.7" width="2" height="2" fill="#333"/><rect x="0.4" y="12.9" width="2" height="2" fill="#333"/><rect x="0.4" y="19.1" width="2" height="2" fill="#333"/></svg>
<svg style="left:853px;top:47px" width="24" height="24" viewBox="0 0 24 24"><g transform="translate(6 1)"><rect x="0" y="2" width="16" height="10" rx="1.5" fill="#9aa0c8" stroke="#6a70a0" stroke-width="0.6"/><rect x="2" y="0.5" width="5" height="2" fill="#8a90b8"/><circle cx="10" cy="7" r="3.6" fill="#d8dcf0" stroke="#50567a" stroke-width="1"/><circle cx="10" cy="7" r="1.6" fill="#6a70a0"/></g><path d="M2 11H11L12.5 12.5V22H2Z" fill="#4a4e98" stroke="#2a2e68" stroke-width="0.5"/><rect x="4" y="11.5" width="6" height="4" fill="#e0e2f0"/><rect x="4.5" y="17.5" width="5" height="4.5" fill="#c0c4e0"/><rect x="6" y="18.5" width="1.6" height="2.8" fill="#2a2e68"/></svg>
<svg style="left:881px;top:47px" width="24" height="24" viewBox="0 0 24 24"><g transform="translate(6 1)"><rect x="0" y="2" width="16" height="10" rx="1.5" fill="#9aa0c8" stroke="#6a70a0" stroke-width="0.6"/><rect x="2" y="0.5" width="5" height="2" fill="#8a90b8"/><circle cx="10" cy="7" r="3.6" fill="#d8dcf0" stroke="#50567a" stroke-width="1"/><circle cx="10" cy="7" r="1.6" fill="#6a70a0"/></g><rect x="1.5" y="10.5" width="14" height="11" fill="#d8dae8" stroke="#3a3e68" stroke-width="1"/><rect x="2" y="11" width="13" height="2" fill="#aeb2d0"/></svg>
<svg style="left:909px;top:47px" width="24" height="24" viewBox="0 0 24 24"><g transform="translate(6 1)"><rect x="0" y="2" width="16" height="10" rx="1.5" fill="#9aa0c8" stroke="#6a70a0" stroke-width="0.6"/><rect x="2" y="0.5" width="5" height="2" fill="#8a90b8"/><circle cx="10" cy="7" r="3.6" fill="#d8dcf0" stroke="#50567a" stroke-width="1"/><circle cx="10" cy="7" r="1.6" fill="#6a70a0"/></g><rect x="1.5" y="16" width="14" height="6" fill="#c8cad8" stroke="#3a3e58" stroke-width="1"/><rect x="4" y="18.3" width="7" height="1.4" fill="#fff"/></svg>
<svg style="left:937px;top:47px" width="24" height="24" viewBox="0 0 24 24"><g transform="translate(6 1)"><rect x="0" y="2" width="16" height="10" rx="1.5" fill="#9aa0c8" stroke="#6a70a0" stroke-width="0.6"/><rect x="2" y="0.5" width="5" height="2" fill="#8a90b8"/><circle cx="10" cy="7" r="3.6" fill="#d8dcf0" stroke="#50567a" stroke-width="1"/><circle cx="10" cy="7" r="1.6" fill="#6a70a0"/></g><rect x="1.5" y="10.5" width="14" height="11" fill="none" stroke="#222" stroke-width="1.1" stroke-dasharray="2 1.4"/></svg>
<svg style="left:965px;top:47px" width="24" height="24" viewBox="0 0 24 24"><g transform="translate(6 1)"><rect x="0" y="2" width="16" height="10" rx="1.5" fill="#9aa0c8" stroke="#6a70a0" stroke-width="0.6"/><rect x="2" y="0.5" width="5" height="2" fill="#8a90b8"/><circle cx="10" cy="7" r="3.6" fill="#d8dcf0" stroke="#50567a" stroke-width="1"/><circle cx="10" cy="7" r="1.6" fill="#6a70a0"/></g><rect x="1.5" y="10.5" width="14" height="11" fill="#d8dae8" stroke="#3a3e58" stroke-width="1"/><rect x="4.5" y="13.5" width="8" height="5.5" fill="#8a8eb8" stroke="#1a1e38" stroke-width="1.2"/></svg>
<div style="left:995px;top:49px;width:1px;height:22px;background:#b8b8b8"></div>
<svg style="left:1003px;top:47px" width="24" height="24" viewBox="0 0 24 24"><g transform="translate(6 1)"><rect x="0" y="2" width="16" height="10" rx="1.5" fill="#9aa0c8" stroke="#6a70a0" stroke-width="0.6"/><rect x="2" y="0.5" width="5" height="2" fill="#8a90b8"/><circle cx="10" cy="7" r="3.6" fill="#d8dcf0" stroke="#50567a" stroke-width="1"/><circle cx="10" cy="7" r="1.6" fill="#6a70a0"/></g><rect x="1.5" y="10.5" width="14" height="11" fill="#fff" stroke="#8a8a70" stroke-width="1"/><rect x="2.5" y="11.5" width="12" height="5" fill="#7ac0f0"/><rect x="2.5" y="16.5" width="12" height="4" fill="#a0d060"/><circle cx="7" cy="14.5" r="1.5" fill="#f8f0a0"/></svg>
<div style="left:4px;top:80px;width:50px;height:21px;background:#f4f4f4;border-top:1px solid #fff;border-left:1px solid #fff;border-right:1px solid #6a6a6a;border-top-right-radius:3px"></div><div class="t" style="left:13px;top:88px;font-size:11px;">Utility</div>
<div style="left:56px;top:80px;width:50px;height:21px;background:#f4f4f4;border-top:1px solid #fff;border-left:1px solid #fff;border-right:1px solid #6a6a6a;border-top-right-radius:3px"></div><div class="t" style="left:66px;top:88px;font-size:11px;">Mask</div>
<div style="left:107px;top:78px;width:53px;height:23px;background:#f4f4f4;border-top:1px solid #fff;border-left:1px solid #fff;border-right:1px solid #6a6a6a;border-top-right-radius:3px"></div><div class="t" style="left:117px;top:87px;font-size:11px;font-weight:bold;">Model</div>
<svg style="left:577px;top:73px" width="9" height="9"><path d="M0.5 0.5L8 8M8 0.5L0.5 8" stroke="#222" stroke-width="1"/></svg>
<div style="left:6px;top:103px;width:28px;height:28px;background:#f9c381;border:1px solid #e4a660"></div>
<svg style="left:7.5px;top:105px" width="24" height="24" viewBox="0 0 24 24"><g transform="translate(3 4) scale(1.05)"><path d="M0 3Q0 1 2 1H7L9 3H15Q16 3 16 4V14H0Z" fill="#8a8886"/><path d="M1 5H16V15H1Z" fill="#b8b6b2" stroke="#a0a0a0" stroke-width="0.5"/></g></svg>
<svg style="left:36px;top:105px" width="24" height="24" viewBox="0 0 24 24"><g transform="translate(1 1) scale(0.95)"><path d="M0 3Q0 1 2 1H7L9 3H15Q16 3 16 4V14H0Z" fill="#b4b4b4"/><path d="M1 5H16V15H1Z" fill="#d6d6d6" stroke="#a0a0a0" stroke-width="0.5"/></g><path d="M8 14L17 9M8 14H17M8 14L15 20" stroke="#333" stroke-width="0.8"/><circle cx="7.5" cy="14" r="3" fill="#3a7ad8"/><circle cx="17.5" cy="8.5" r="2" fill="#3a7ad8"/><circle cx="18.5" cy="14" r="2" fill="#3a7ad8"/><circle cx="15.5" cy="20" r="2" fill="#3a7ad8"/></svg>
<svg style="left:64px;top:105px" width="24" height="24" viewBox="0 0 24 24"><g transform="translate(1 1) scale(0.95)"><path d="M0 3Q0 1 2 1H7L9 3H15Q16 3 16 4V14H0Z" fill="#b4b4b4"/><path d="M1 5H16V15H1Z" fill="#d6d6d6" stroke="#a0a0a0" stroke-width="0.5"/></g><g transform="translate(5 8) scale(1.05)"><path d="M0 5L8 0L16 5L8 10Z" fill="#5a6af0"/><path d="M0 5L8 10V14L0 9Z" fill="#1a28b0"/><path d="M16 5L8 10V14L16 9Z" fill="#2a3ad0"/></g></svg>
<svg style="left:92px;top:105px" width="24" height="24" viewBox="0 0 24 24"><g transform="translate(1 1) scale(0.95)"><path d="M0 3Q0 1 2 1H7L9 3H15Q16 3 16 4V14H0Z" fill="#b4b4b4"/><path d="M1 5H16V15H1Z" fill="#d6d6d6" stroke="#a0a0a0" stroke-width="0.5"/></g><path d="M8 21V13Q8 9 12.5 9Q17 9 17 13" fill="none" stroke="#d83020" stroke-width="1.2"/><path d="M10.5 12H15.5L13.8 16.5L15.5 21H10.5L12.2 16.5Z" fill="#ccc" stroke="#555" stroke-width="0.7"/><path d="M7 21.5H19" stroke="#555" stroke-width="1"/></svg>
<svg style="left:120px;top:105px" width="24" height="24" viewBox="0 0 24 24"><g transform="translate(1 1) scale(0.95)"><path d="M0 3Q0 1 2 1H7L9 3H15Q16 3 16 4V14H0Z" fill="#b4b4b4"/><path d="M1 5H16V15H1Z" fill="#d6d6d6" stroke="#a0a0a0" stroke-width="0.5"/></g><g transform="translate(6 9) scale(1.0)"><path d="M0 5L8 0L16 5L8 10Z" fill="#b8b8b8" stroke="#555" stroke-width="0.5"/><path d="M0 5L8 10V14L0 9Z" fill="#6a6a6a"/><path d="M16 5L8 10V14L16 9Z" fill="#8a8a8a"/></g><text x="3" y="9" font-size="8" font-weight="bold" font-family="Liberation Sans,sans-serif" fill="#000">t</text><path d="M4.5 11V19M3 13L4.5 11L6 13M3 17L4.5 19L6 17" stroke="#d83020" stroke-width="0.8" fill="none"/></svg>
<svg style="left:148px;top:105px" width="24" height="24" viewBox="0 0 24 24"><g transform="translate(1 1) scale(0.95)"><path d="M0 3Q0 1 2 1H7L9 3H15Q16 3 16 4V14H0Z" fill="#b4b4b4"/><path d="M1 5H16V15H1Z" fill="#d6d6d6" stroke="#a0a0a0" stroke-width="0.5"/></g><g transform="translate(3 7) scale(1.05)"><g transform="translate(4 0) scale(1)"><path d="M0 3L5 0L10 3L5 6Z" fill="#7ee07e"/><path d="M0 3L5 6V10L0 7Z" fill="#2fa02f"/><path d="M10 3L5 6V10L10 7Z" fill="#1f7f1f"/></g><g transform="translate(0 5) scale(1)"><path d="M0 3L5 0L10 3L5 6Z" fill="#6a7af0"/><path d="M0 3L5 6V10L0 7Z" fill="#2838c8"/><path d="M10 3L5 6V10L10 7Z" fill="#1a289a"/></g><g transform="translate(8 5) scale(1)"><path d="M0 3L5 0L10 3L5 6Z" fill="#ffc96a"/><path d="M0 3L5 6V10L0 7Z" fill="#e09020"/><path d="M10 3L5 6V10L10 7Z" fill="#b87010"/></g></g></svg>
<svg style="left:176px;top:105px" width="24" height="24" viewBox="0 0 24 24"><g transform="translate(1 1) scale(0.95)"><path d="M0 3Q0 1 2 1H7L9 3H15Q16 3 16 4V14H0Z" fill="#b4b4b4"/><path d="M1 5H16V15H1Z" fill="#d6d6d6" stroke="#a0a0a0" stroke-width="0.5"/></g><path d="M9 9L14 7L20 9V12L17 13V17L20 18V21L14 23L9 21V18L12 17V13L9 12Z" fill="#8a8888" stroke="#666" stroke-width="0.5"/></svg>
<svg style="left:570px;top:139px" width="13" height="13"><circle cx="5.5" cy="5.5" r="4" fill="none" stroke="#333" stroke-width="1.2"/><path d="M8.5 8.5L12 12" stroke="#333" stroke-width="1.5"/></svg>
<svg style="left:7.5px;top:161px" width="24" height="24" viewBox="0 0 24 24"><path d="M2 7L11 3V13L2 17Z" fill="#6a70b8" stroke="#33386a" stroke-width="0.6"/><path d="M6.5 5V15M2 12L11 8" stroke="#33386a" stroke-width="0.6"/><path d="M7 11Q13 13 20 7V17Q13 22 7 21Z" fill="#4a90e0" stroke="#2a5aa8" stroke-width="0.6"/></svg>
<svg style="left:34px;top:173.5px" width="6" height="3"><path d="M0 0H6L3 3Z" fill="#000"/></svg>
<svg style="left:43px;top:160px" width="26" height="26" viewBox="0 0 26 26"><g transform="translate(0 1) scale(1.2)"><path d="M0 5Q7 -2 15 5Q7 11 0 5Z" fill="#e4e6ee" stroke="#8a8c98" stroke-width="1"/><circle cx="7.5" cy="4.8" r="3" fill="#8aa0d0"/><circle cx="7.5" cy="4.8" r="1.3" fill="#4a5a90"/></g><path d="M12 10V21M12 13.5H14M12 20.5H14" stroke="#667" stroke-width="0.8" fill="none"/><g transform="translate(14.5 10)"><rect x="0" y="0" width="6" height="6" fill="#fff" stroke="#889" stroke-width="0.7"/><path d="M1.5 3L2.8 4.5L5 1.5" stroke="#223" stroke-width="1" fill="none"/></g><g transform="translate(14.5 17.5)"><rect x="0" y="0" width="6" height="6" fill="#fff" stroke="#889" stroke-width="0.7"/><path d="M1.5 3L2.8 4.5L5 1.5" stroke="#223" stroke-width="1" fill="none"/></g></svg>
<svg style="left:71px;top:160px" width="26" height="26" viewBox="0 0 26 26"><g transform="translate(0 1) scale(1.2)"><path d="M0 5Q7 -2 15 5Q7 11 0 5Z" fill="#e4e6ee" stroke="#8a8c98" stroke-width="1"/><circle cx="7.5" cy="4.8" r="3" fill="#8aa0d0"/><circle cx="7.5" cy="4.8" r="1.3" fill="#4a5a90"/></g><path d="M12 10V21M12 13.5H14M12 20.5H14" stroke="#667" stroke-width="0.8" fill="none"/><g transform="translate(14.5 10)"><rect x="0" y="0" width="6" height="6" fill="#fff" stroke="#889" stroke-width="0.7"/></g><g transform="translate(14.5 17.5)"><rect x="0" y="0" width="6" height="6" fill="#fff" stroke="#889" stroke-width="0.7"/></g></svg>
<svg style="left:99px;top:160px" width="26" height="26" viewBox="0 0 26 26"><g transform="translate(0 1) scale(1.2)"><path d="M0 5Q7 -2 15 5Q7 11 0 5Z" fill="#e4e6ee" stroke="#8a8c98" stroke-width="1"/><circle cx="7.5" cy="4.8" r="3" fill="#8aa0d0"/><circle cx="7.5" cy="4.8" r="1.3" fill="#4a5a90"/></g><g transform="translate(7.5 11)"><rect x="0" y="0" width="6" height="6" fill="#fff" stroke="#889" stroke-width="0.7"/><path d="M1.5 3L2.8 4.5L5 1.5" stroke="#223" stroke-width="1" fill="none"/></g><g transform="translate(15.5 16.5)"><rect x="0" y="0" width="6" height="6" fill="#fff" stroke="#889" stroke-width="0.7"/></g><path d="M16 10Q19 10 19.5 14M10 19Q11 22 14 22" stroke="#889" stroke-width="1" fill="none"/></svg>
<svg style="left:404px;top:161px" width="24" height="24" viewBox="0 0 24 24"><g transform="translate(4 6) scale(1.0)"><path d="M0 5L8 0L16 5L8 10Z" fill="#5a6af0"/><path d="M0 5L8 10V14L0 9Z" fill="#1a28b0"/><path d="M16 5L8 10V14L16 9Z" fill="#2a3ad0"/></g></svg>
<svg style="left:430.5px;top:173.5px" width="6" height="3"><path d="M0 0H6L3 3Z" fill="#000"/></svg>
<svg style="left:439px;top:161px" width="24" height="24" viewBox="0 0 24 24"><path d="M2 7L11 3V13L2 17Z" fill="#6a70b8" stroke="#33386a" stroke-width="0.6"/><path d="M6.5 5V15M2 12L11 8" stroke="#33386a" stroke-width="0.6"/><path d="M7 11Q13 13 20 7V17Q13 22 7 21Z" fill="#4a90e0" stroke="#2a5aa8" stroke-width="0.6"/></svg>
<svg style="left:465.5px;top:173.5px" width="6" height="3"><path d="M0 0H6L3 3Z" fill="#000"/></svg>
<svg style="left:475px;top:161px" width="24" height="24" viewBox="0 0 24 24"><path d="M8 3V19L11.5 15.5L14 21L16 20L13.5 14.5H18Z" fill="#fff" stroke="#000" stroke-width="1"/></svg>
<svg style="left:503px;top:161px" width="24" height="24" viewBox="0 0 24 24"><rect x="3" y="12" width="17" height="8" fill="#eaf040" stroke="#48c0b0" stroke-width="1.2"/><path d="M9 3Q15 4 15 10M12.5 8L15 11.5L17.5 8" stroke="#1a3a1a" stroke-width="1.4" fill="none"/></svg>
<svg style="left:530px;top:160px" width="26" height="26" viewBox="0 0 26 26"><g transform="translate(1.5 1.5) scale(1.45)"><path d="M0 5Q7 -2 15 5Q7 11 0 5Z" fill="#e4e6ee" stroke="#8a8c98" stroke-width="1"/><circle cx="7.5" cy="4.8" r="3" fill="#8aa0d0"/><circle cx="7.5" cy="4.8" r="1.3" fill="#4a5a90"/></g><text x="5" y="24" font-size="10" font-weight="bold" font-family="Liberation Sans,sans-serif" fill="#333">+/&#8211;</text></svg>
<svg style="left:558px;top:160px" width="26" height="26" viewBox="0 0 26 26"><g transform="translate(1.5 1.5) scale(1.45)"><path d="M0 5Q7 -2 15 5Q7 11 0 5Z" fill="#e4e6ee" stroke="#8a8c98" stroke-width="1"/><circle cx="7.5" cy="4.8" r="3" fill="#8aa0d0"/><circle cx="7.5" cy="4.8" r="1.3" fill="#4a5a90"/></g><text x="17" y="24" font-size="9" font-weight="bold" font-family="Liberation Sans,sans-serif" fill="#333">1</text></svg>
<div style="left:133.5px;top:192px;width:1px;height:20px;background:#d4d4d4"></div>
<div style="left:158.5px;top:192px;width:1px;height:20px;background:#d4d4d4"></div>
<div style="left:183.5px;top:192px;width:1px;height:20px;background:#d4d4d4"></div>
<div style="left:229px;top:192px;width:1px;height:20px;background:#d4d4d4"></div>
<div class="t" style="left:7px;top:198px;font-size:10px;color:#000;font-family:'Liberation Mono',monospace;font-weight:bold;">Name</div>
<div class="t" style="left:145px;top:198px;font-size:10px;color:#000;font-family:'Liberation Mono',monospace;font-weight:bold;">ID</div>
<div class="t" style="left:186px;top:198px;font-size:10px;color:#000;font-family:'Liberation Mono',monospace;font-weight:bold;">Include</div>
<svg style="left:162px;top:196px" width="15" height="15"><defs><clipPath id="cw"><circle cx="7.5" cy="7.5" r="7"/></clipPath></defs><g clip-path="url(#cw)"><path d="M7.5 7.5L7.5 -3L20 0Z" fill="#20c020"/><path d="M7.5 7.5L20 0L20 10Z" fill="#20d0d0"/><path d="M7.5 7.5L20 10L12 20Z" fill="#f0e020"/><path d="M7.5 7.5L12 20L2 20Z" fill="#f03020"/><path d="M7.5 7.5L2 20L-5 10Z" fill="#d020d0"/><path d="M7.5 7.5L-5 10L-3 -3L7.5 -3Z" fill="#2030e0"/></g></svg>
<div class="t" style="left:45px;top:217.5px;font-size:10px;color:#000;font-family:'Liberation Mono',monospace;">Components (1)</div>
<div class="t" style="left:45px;top:234.5px;font-size:10px;color:#000;font-family:'Liberation Mono',monospace;">Titles (1)</div>
<svg style="left:10px;top:214px" width="32" height="34"><path d="M4.5 8V30M5 7.5H14M5 24.5H14" stroke="#999" stroke-width="1" stroke-dasharray="1 1" fill="none"/><path d="M2 4.5L6 7.5L2 10.5ZM2 21.5L6 24.5L2 27.5Z" fill="#aaa"/></svg>
<svg style="left:24px;top:213px" width="18" height="16" viewBox="0 0 18 16"><g transform="translate(0 0) scale(0.75)"><path d="M0 3Q0 1 2 1H7L9 3H15Q16 3 16 4V14H0Z" fill="#e9b94e"/><path d="M1 5H16V15H1Z" fill="#f7d98a" stroke="#d9a848" stroke-width="0.5"/></g><g transform="translate(4 5) scale(0.72)"><path d="M0 5L8 0L16 5L8 10Z" fill="#5a6af0"/><path d="M0 5L8 10V14L0 9Z" fill="#1a28b0"/><path d="M16 5L8 10V14L16 9Z" fill="#2a3ad0"/></g></svg>
<svg style="left:24px;top:230px" width="18" height="16" viewBox="0 0 18 16"><g transform="translate(0 0) scale(0.75)"><path d="M0 3Q0 1 2 1H7L9 3H15Q16 3 16 4V14H0Z" fill="#e9b94e"/><path d="M1 5H16V15H1Z" fill="#f7d98a" stroke="#d9a848" stroke-width="0.5"/></g><rect x="6" y="4.5" width="9.5" height="8" fill="#fff" stroke="#000" stroke-width="1.2"/><path d="M8 7H13.5M8 9.5H13.5" stroke="#000" stroke-width="1"/><path d="M6.5 12L4 15.5" stroke="#000" stroke-width="1.2"/></svg>
<svg style="left:286px;top:653px" width="24" height="4"><rect x="2" y="1" width="1.5" height="1.5" fill="#555"/><rect x="10" y="1" width="1.5" height="1.5" fill="#555"/><rect x="18" y="1" width="1.5" height="1.5" fill="#555"/></svg>
<svg style="left:575px;top:652.5px" width="9" height="10"><path d="M2 1.5L4.5 4L7 1.5M2 4.7L4.5 7.200L7 4.7" stroke="#333" stroke-width="1.1" fill="none"/></svg>
<svg style="left:607px;top:83px" width="24" height="3"><rect x="1.0" y="0.5" width="1.8" height="1.8" fill="#333"/><rect x="6.5" y="0.5" width="1.8" height="1.8" fill="#333"/><rect x="12.0" y="0.5" width="1.8" height="1.8" fill="#333"/><rect x="17.5" y="0.5" width="1.8" height="1.8" fill="#333"/></svg>
<svg style="left:606px;top:92px" width="24" height="24" viewBox="0 0 24 24"><path d="M4 8Q10 7 18 3V15Q11 19 4 20Z" fill="#5a62a8"/><path d="M4 8Q10 7 18 3V15Q11 19 4 20ZM8.7 7.3V19M13.4 5.6V17.4M4 12Q11 11 18 7M4 16Q11 15 18 11" fill="none" stroke="#33386a" stroke-width="0.7"/><rect x="2.5" y="10" width="11" height="11" fill="#fff" fill-opacity="0.85" stroke="#e06030" stroke-width="1.2"/><path d="M6 10V21M10 10V21M2.5 14H13.5M2.5 17.5H13.5" stroke="#aab" stroke-width="0.5"/></svg>
<svg style="left:606px;top:119px" width="24" height="24" viewBox="0 0 24 24"><path d="M4 8Q10 7 18 3V15Q11 19 4 20Z" fill="#fff"/><path d="M4 8Q10 7 18 3V15Q11 19 4 20ZM8.7 7.3V19M13.4 5.6V17.4M4 12Q11 11 18 7M4 16Q11 15 18 11" fill="none" stroke="#33386a" stroke-width="0.7"/><path d="M4 8Q10 7 13.4 5.6V13.5Q9 15 4 16Z" fill="#5a62a8" stroke="#33386a" stroke-width="0.6"/><path d="M11 17Q16 20 21 14L22 17Q17 23 11 20Z" fill="#e03020"/><path d="M13 15L9.5 19.5L14 21Z" fill="#e03020"/></svg>
<svg style="left:606px;top:146px" width="24" height="24" viewBox="0 0 24 24"><path d="M4 8Q10 7 18 3V15Q11 19 4 20Z" fill="#fff"/><path d="M4 8Q10 7 18 3V15Q11 19 4 20ZM8.7 7.3V19M13.4 5.6V17.4M4 12Q11 11 18 7M4 16Q11 15 18 11" fill="none" stroke="#33386a" stroke-width="0.7"/><path d="M4 8Q10 7 13.4 5.6V13.5Q9 15 4 16Z" fill="#5a62a8" stroke="#33386a" stroke-width="0.6"/></svg>
<svg style="left:606px;top:174px" width="24" height="24" viewBox="0 0 24 24"><path d="M4 8Q10 7 18 3V15Q11 19 4 20Z" fill="#5a62a8"/><path d="M4 8Q10 7 18 3V15Q11 19 4 20ZM8.7 7.3V19M13.4 5.6V17.4M4 12Q11 11 18 7M4 16Q11 15 18 11" fill="none" stroke="#33386a" stroke-width="0.7"/></svg>
<svg style="left:606px;top:203px" width="24" height="24" viewBox="0 0 24 24"><path d="M4 8Q10 7 18 3V15Q11 19 4 20Z" fill="#fff"/><path d="M4 8Q10 7 18 3V15Q11 19 4 20ZM8.7 7.3V19M13.4 5.6V17.4M4 12Q11 11 18 7M4 16Q11 15 18 11" fill="none" stroke="#33386a" stroke-width="0.7"/><rect x="2.5" y="10" width="11" height="11" fill="#5a62a8" stroke="#e06030" stroke-width="1.2"/><path d="M6 10V21M10 10V21M2.5 14H13.5M2.5 17.5H13.5" stroke="#33386a" stroke-width="0.5"/></svg>
<svg style="left:606px;top:231px" width="24" height="24" viewBox="0 0 24 24"><circle cx="12" cy="12" r="10" fill="#fff" stroke="#e06030" stroke-width="1.2"/><g transform="translate(3 1) scale(0.85)"><path d="M4 8Q10 7 18 3V15Q11 19 4 20Z" fill="#5a62a8"/><path d="M4 8Q10 7 18 3V15Q11 19 4 20ZM8.7 7.3V19M13.4 5.6V17.4M4 12Q11 11 18 7M4 16Q11 15 18 11" fill="none" stroke="#33386a" stroke-width="0.7"/></g></svg>
<svg style="left:606px;top:258px" width="24" height="24" viewBox="0 0 24 24"><g transform="rotate(-25 12 12)"><rect x="3" y="6" width="7" height="12" rx="3" fill="#2a3a7a"/><rect x="13" y="6" width="7" height="12" rx="3" fill="#2a3a7a"/><rect x="9" y="8" width="5" height="5" fill="#3a4a8a"/><ellipse cx="6.5" cy="17" rx="3" ry="2" fill="#8aa0e0"/><ellipse cx="16.5" cy="17" rx="3" ry="2" fill="#8aa0e0"/></g></svg>
<svg style="left:605px;top:288px" width="26" height="24" viewBox="0 0 26 24"><circle cx="7" cy="6" r="4.5" fill="#2a2aa8"/><rect x="6.2" y="5" width="1.7" height="4" fill="#fff"/><circle cx="7" cy="3.5" r="1" fill="#fff"/><text x="5" y="22" font-size="9.5" font-weight="bold" font-family="Liberation Sans,sans-serif" fill="#333">123</text></svg>
<svg style="left:605px;top:317px" width="26" height="24" viewBox="0 0 26 24"><path d="M3 19L20 10M3 15V22M20 7V13" stroke="#2a2a6a" stroke-width="1.6"/><text x="1" y="11" font-size="7.5" font-family="Liberation Sans,sans-serif" fill="#111">0</text><text x="19" y="6" font-size="7.5" font-family="Liberation Sans,sans-serif" fill="#111">1</text><text x="10" y="23" font-size="7.5" font-family="Liberation Sans,sans-serif" fill="#111">+10'</text></svg>
<div style="left:604px;top:342px;width:27px;height:26px;background:linear-gradient(#fbd59a,#f6b55e);border:1px solid #d8a058"></div>
<svg style="left:605px;top:343px" width="26" height="24" viewBox="0 0 26 24"><path d="M3 4L11 2.5V10L3 11.5Z" fill="#6a70b0" stroke="#33386a" stroke-width="0.6"/><path d="M7 3.2V10.8M3 7.7L11 6.2" stroke="#dde" stroke-width="0.7"/><text x="5" y="21" font-size="8.5" font-weight="bold" font-family="Liberation Sans,sans-serif" fill="#6a4a2a">ABC</text></svg>
<svg style="left:605px;top:372px" width="26" height="24" viewBox="0 0 26 24"><path d="M4.5 1V9M2.5 7L4.5 11L6.5 7" stroke="#d82020" stroke-width="1.4" fill="none"/><circle cx="4.5" cy="13" r="1.6" fill="#000"/><text x="5.5" y="23" font-size="8.5" font-weight="bold" font-family="Liberation Sans,sans-serif" fill="#444">ABC</text></svg>
<svg style="left:605px;top:397px" width="26" height="26" viewBox="0 0 26 26"><path d="M2 7L8 5.5V11L2 12.5ZM8.5 5.5L14 4V10L8.5 11Z" fill="#8a8ec8" stroke="#44486a" stroke-width="0.6"/><path d="M11 15L17 13.5V19L11 20.5ZM17.5 13.5L23 12V18L17.5 19.5Z" fill="#8a8ec8" stroke="#44486a" stroke-width="0.6"/><path d="M5 0V4M3.5 3L5 6L6.5 3M20 19V23M18.5 22L20 25L21.5 22" stroke="#d82020" stroke-width="1.3" fill="none"/><path d="M15 5Q19 2 21 7M20 10Q17 11 15.5 8" stroke="#889" stroke-width="1.2" fill="none"/></svg>
<div style="left:604px;top:425px;width:27px;height:27px;background:linear-gradient(#fbd59a,#f6b55e);border:1px solid #d8a058"></div>
<svg style="left:606px;top:426.5px" width="24" height="24" viewBox="0 0 24 24"><path d="M5 9L19 5L17 17L6 20Z" fill="#4a8ae0" stroke="#1a2a6a" stroke-width="1"/><circle cx="5" cy="9" r="1.8" fill="#fff" stroke="#000" stroke-width="0.8"/><circle cx="19" cy="5" r="1.8" fill="#fff" stroke="#000" stroke-width="0.8"/><circle cx="17" cy="17" r="1.8" fill="#fff" stroke="#000" stroke-width="0.8"/><circle cx="6" cy="20" r="1.8" fill="#fff" stroke="#000" stroke-width="0.8"/></svg>
<svg style="left:603px;top:828px" width="3" height="22"><rect x="0.4" y="0.5" width="2" height="2" fill="#333"/><rect x="0.4" y="6.7" width="2" height="2" fill="#333"/><rect x="0.4" y="12.9" width="2" height="2" fill="#333"/><rect x="0.4" y="19.1" width="2" height="2" fill="#333"/></svg>
<svg style="left:611px;top:826px" width="24" height="24" viewBox="0 0 24 24"><g transform="translate(1 1) scale(1.05)"><path d="M0 3Q0 1 2 1H7L9 3H15Q16 3 16 4V14H0Z" fill="#e9b94e"/><path d="M1 5H16V15H1Z" fill="#f7d98a" stroke="#d9a848" stroke-width="0.5"/></g><g transform="translate(5 9) scale(0.95)"><g transform="translate(4 0) scale(1)"><path d="M0 3L5 0L10 3L5 6Z" fill="#7ee07e"/><path d="M0 3L5 6V10L0 7Z" fill="#2fa02f"/><path d="M10 3L5 6V10L10 7Z" fill="#1f7f1f"/></g><g transform="translate(0 5) scale(1)"><path d="M0 3L5 0L10 3L5 6Z" fill="#6a7af0"/><path d="M0 3L5 6V10L0 7Z" fill="#2838c8"/><path d="M10 3L5 6V10L10 7Z" fill="#1a289a"/></g><g transform="translate(8 5) scale(1)"><path d="M0 3L5 0L10 3L5 6Z" fill="#ffc96a"/><path d="M0 3L5 6V10L0 7Z" fill="#e09020"/><path d="M10 3L5 6V10L10 7Z" fill="#b87010"/></g></g></svg>
<svg style="left:639px;top:826px" width="24" height="24" viewBox="0 0 24 24"><g transform="translate(1 1) scale(1.05)"><path d="M0 3Q0 1 2 1H7L9 3H15Q16 3 16 4V14H0Z" fill="#e9b94e"/><path d="M1 5H16V15H1Z" fill="#f7d98a" stroke="#d9a848" stroke-width="0.5"/></g><g transform="translate(6 9) scale(1.0)"><path d="M0 5L8 0L16 5L8 10Z" fill="#5a6af0"/><path d="M0 5L8 10V14L0 9Z" fill="#1a28b0"/><path d="M16 5L8 10V14L16 9Z" fill="#2a3ad0"/></g></svg>
<svg style="left:667px;top:826px" width="24" height="24" viewBox="0 0 24 24"><g transform="translate(1 1) scale(1.05)"><path d="M0 3Q0 1 2 1H7L9 3H15Q16 3 16 4V14H0Z" fill="#e9b94e"/><path d="M1 5H16V15H1Z" fill="#f7d98a" stroke="#d9a848" stroke-width="0.5"/></g><path d="M9 21V13Q9 9 13.5 9Q18 9 18 13" fill="none" stroke="#d83020" stroke-width="1.2"/><path d="M11.5 12H16.5L14.8 16.5L16.5 21H11.5L13.2 16.5Z" fill="#ddd" stroke="#555" stroke-width="0.7"/><path d="M8 21.5H20" stroke="#555" stroke-width="1"/></svg>
<svg style="left:695px;top:826px" width="24" height="24" viewBox="0 0 24 24"><g transform="translate(1 1) scale(1.05)"><path d="M0 3Q0 1 2 1H7L9 3H15Q16 3 16 4V14H0Z" fill="#e9b94e"/><path d="M1 5H16V15H1Z" fill="#f7d98a" stroke="#d9a848" stroke-width="0.5"/></g><g transform="translate(7 9) scale(0.95)"><path d="M0 5L8 0L16 5L8 10Z" fill="#b8b8b8" stroke="#555" stroke-width="0.5"/><path d="M0 5L8 10V14L0 9Z" fill="#6a6a6a"/><path d="M16 5L8 10V14L16 9Z" fill="#8a8a8a"/></g><text x="4" y="9" font-size="8" font-weight="bold" font-family="Liberation Sans,sans-serif" fill="#000">t</text><path d="M5 11V19M3.5 13L5 11L6.5 13M3.5 17L5 19L6.5 17" stroke="#d83020" stroke-width="0.8" fill="none"/></svg>
<svg style="left:723px;top:826px" width="24" height="24" viewBox="0 0 24 24"><g transform="translate(1 1) scale(1.05)"><path d="M0 3Q0 1 2 1H7L9 3H15Q16 3 16 4V14H0Z" fill="#e9b94e"/><path d="M1 5H16V15H1Z" fill="#f7d98a" stroke="#d9a848" stroke-width="0.5"/></g><path d="M11 3V15M8 12.5L11 18L14 12.5" stroke="#d82020" stroke-width="2.2" fill="none"/><circle cx="11" cy="20" r="1.8" fill="#000"/><rect x="15" y="14" width="7" height="7" fill="#6ab040" stroke="#3a7020" stroke-width="0.6"/><path d="M15 16.3H22M15 18.6H22" stroke="#3a7020" stroke-width="0.6"/></svg>
<svg style="left:751px;top:826px" width="24" height="24" viewBox="0 0 24 24"><g transform="translate(1 1) scale(1.05)"><path d="M0 3Q0 1 2 1H7L9 3H15Q16 3 16 4V14H0Z" fill="#e9b94e"/><path d="M1 5H16V15H1Z" fill="#f7d98a" stroke="#d9a848" stroke-width="0.5"/></g><path d="M11 7V15L5 20M11 15L17 19" stroke="#667" stroke-width="1.8" fill="none"/><rect x="15" y="14" width="7" height="7" fill="#6ab040" stroke="#3a7020" stroke-width="0.6"/><path d="M15 16.3H22M15 18.6H22" stroke="#3a7020" stroke-width="0.6"/></svg>
<svg style="left:778px;top:836.5px" width="6" height="3"><path d="M0 0H6L3 3Z" fill="#000"/></svg>
<div style="left:791px;top:829px;width:1px;height:22px;background:#b8b8b8"></div>
<svg style="left:799px;top:826px" width="24" height="24" viewBox="0 0 24 24"><path d="M4 7L7 4L12 9L17 4L20 7L15 12L20 17L17 20L12 15L7 20L4 17L9 12Z" fill="#e83028" stroke="#c01810" stroke-width="0.8"/></svg>
<svg style="left:827px;top:826px" width="24" height="24" viewBox="0 0 24 24"><path d="M3 9Q3 5 7 5Q9 5 9 8V17H3Z" fill="#909090" stroke="#555" stroke-width="0.7"/><path d="M9 9Q9 5 13 5Q15 5 15 8V19H9Z" fill="#a0a0a0" stroke="#555" stroke-width="0.7"/><path d="M15 9Q15 5 19 5Q22 5 22 8V20H15Z" fill="#b0b0b0" stroke="#555" stroke-width="0.7"/></svg>
<svg style="left:855px;top:826px" width="24" height="24" viewBox="0 0 24 24"><g transform="translate(1 1) scale(0.9)"><path d="M0 3Q0 1 2 1H7L9 3H15Q16 3 16 4V14H0Z" fill="#f0a840"/><path d="M1 5H16V15H1Z" fill="#fbd088" stroke="#d9a848" stroke-width="0.5"/></g><g transform="translate(6 6) scale(0.95)"><path d="M0 3Q0 1 2 1H7L9 3H15Q16 3 16 4V14H0Z" fill="#f0a840"/><path d="M1 5H16V15H1Z" fill="#fbd088" stroke="#d9a848" stroke-width="0.5"/></g><path d="M6 14H13V11.5L18 16L13 20.5V18H6Z" fill="#e84020" transform="rotate(180 12 16)"/></svg>
<svg style="left:883px;top:826px" width="24" height="24" viewBox="0 0 24 24"><g font-size="8" font-weight="bold" font-family="Liberation Sans,sans-serif" fill="#555"><text x="13" y="8">2</text><text x="10" y="15.5">1</text><text x="9" y="23">3</text></g><path d="M4 9Q6 5 10 5M4 9L3.5 5.5M4 9L7.5 8.5" stroke="#d82020" stroke-width="1.1" fill="none"/><path d="M16 13Q19 12 20 9M20 9L17.5 10M20 9L21.5 11.5" stroke="#d82020" stroke-width="1.1" fill="none"/></svg>
<svg style="left:916px;top:828px" width="3" height="22"><rect x="0.4" y="0.5" width="2" height="2" fill="#333"/><rect x="0.4" y="6.7" width="2" height="2" fill="#333"/><rect x="0.4" y="12.9" width="2" height="2" fill="#333"/><rect x="0.4" y="19.1" width="2" height="2" fill="#333"/></svg>
<div style="left:922px;top:829px;width:98px;height:21px;background:#fff"></div>
<svg style="left:919px;top:826px" width="24" height="24" viewBox="0 0 24 24"><path d="M3 10Q5 2 13 3L19 8Q12 7 9 14Z" fill="#7a80b8" stroke="#44486a" stroke-width="0.6"/><path d="M13 3L19 8V12L16 9" fill="#aab0d8" stroke="#44486a" stroke-width="0.5"/><g transform="translate(3 18)"><rect x="0" y="0" width="2.8" height="2.6" fill="#3040d0"/><rect x="2.8" y="0" width="2.8" height="2.6" fill="#20b0e0"/><rect x="5.6" y="0" width="2.8" height="2.6" fill="#30c040"/><rect x="8.4" y="0" width="2.8" height="2.6" fill="#e8d820"/><rect x="11.2" y="0" width="2.8" height="2.6" fill="#e03020"/></g></svg>
<div class="t" style="left:943px;top:833px;font-size:12px;color:#000;">Auto</div>
<svg style="left:1008.0px;top:837.0px" width="8" height="4"><path d="M0 0H8L4.0 4Z" fill="#000"/></svg>
<svg style="left:1023px;top:826px" width="24" height="24" viewBox="0 0 24 24"><path d="M3 10Q5 2 13 3L21 10Q14 8 10 17Z" fill="#fff" stroke="#444" stroke-width="0.9"/><path d="M21 10V14L18 11" fill="#fff" stroke="#444" stroke-width="0.8"/></svg>
<svg style="left:1050px;top:837.5px" width="6" height="3"><path d="M0 0H6L3 3Z" fill="#000"/></svg>
<svg style="left:1061px;top:826px" width="24" height="24" viewBox="0 0 24 24"><path d="M3 10Q5 2 13 3L21 10Q14 8 10 17Z" fill="#7a80b8" stroke="#44486a" stroke-width="0.8"/><path d="M21 10V14L18 11" fill="#aab0d8" stroke="#44486a" stroke-width="0.6"/></svg>
<svg style="left:1088px;top:837.5px" width="6" height="3"><path d="M0 0H6L3 3Z" fill="#000"/></svg>
<svg style="left:1098.5px;top:826px" width="24" height="24" viewBox="0 0 24 24"><path d="M3 7L13 3L21 6L11 10Z" fill="#b8bce8" stroke="#44486a" stroke-width="0.7"/><path d="M3 7L11 10V22L3 18Z" fill="#8a90d0" stroke="#44486a" stroke-width="0.7"/><path d="M21 6L11 10V22L21 17Z" fill="#a0a6dc" stroke="#44486a" stroke-width="0.7"/><path d="M13 3V14L3 18M13 14L21 17" stroke="#66a" stroke-width="0.5" fill="none"/></svg>
<div style="left:1129.5px;top:829px;width:1px;height:22px;background:#b8b8b8"></div>
<div style="left:1135px;top:829px;width:104px;height:21px;background:#fff"></div>
<svg style="left:1132px;top:825px" width="24" height="24" viewBox="0 0 24 24"><g transform="translate(1 -1) scale(0.85)"><path d="M3 7L13 3L21 6L11 10Z" fill="#b0b4e0" stroke="#2a2e5a" stroke-width="0.7"/><path d="M3 7L11 10V22L3 18Z" fill="#6468b0" stroke="#2a2e5a" stroke-width="0.7"/><path d="M21 6L11 10V22L21 17Z" fill="#8488c8" stroke="#2a2e5a" stroke-width="0.7"/><path d="M3 12.5L11 16L21 11.5M7 8.5V20M16 8V19.5M8 5L16 8M17 4.5L7 8.5" stroke="#22264a" stroke-width="0.7" fill="none"/></g><g transform="translate(3 19.5)"><rect x="0" y="0" width="2.8" height="2.6" fill="#3040d0"/><rect x="2.8" y="0" width="2.8" height="2.6" fill="#20b0e0"/><rect x="5.6" y="0" width="2.8" height="2.6" fill="#30c040"/><rect x="8.4" y="0" width="2.8" height="2.6" fill="#e8d820"/><rect x="11.2" y="0" width="2.8" height="2.6" fill="#e03020"/></g></svg>
<div class="t" style="left:1156px;top:833px;font-size:12px;color:#000;">By Comp</div>
<svg style="left:1227.0px;top:837.0px" width="8" height="4"><path d="M0 0H8L4.0 4Z" fill="#000"/></svg>
<svg style="left:1241px;top:826px" width="24" height="24" viewBox="0 0 24 24"><path d="M3 7L13 3L21 6L11 10Z" fill="#fff" stroke="#444" stroke-width="0.7"/><path d="M3 7L11 10V22L3 18Z" fill="#fff" stroke="#444" stroke-width="0.7"/><path d="M21 6L11 10V22L21 17Z" fill="#fff" stroke="#444" stroke-width="0.7"/><path d="M3 12.5L11 16L21 11.5M7 8.5V20M16 8V19.5M8 5L16 8M17 4.5L7 8.5" stroke="#444" stroke-width="0.7" fill="none"/></svg>
<svg style="left:1269px;top:837.5px" width="6" height="3"><path d="M0 0H6L3 3Z" fill="#000"/></svg>
<svg style="left:1279px;top:826px" width="24" height="24" viewBox="0 0 24 24"><path d="M3 7L13 3L21 6L11 10Z" fill="#b0b4e0" stroke="#2a2e5a" stroke-width="0.7"/><path d="M3 7L11 10V22L3 18Z" fill="#6468b0" stroke="#2a2e5a" stroke-width="0.7"/><path d="M21 6L11 10V22L21 17Z" fill="#8488c8" stroke="#2a2e5a" stroke-width="0.7"/><path d="M3 12.5L11 16L21 11.5M7 8.5V20M16 8V19.5M8 5L16 8M17 4.5L7 8.5" stroke="#22264a" stroke-width="0.7" fill="none"/></svg>
<svg style="left:1307px;top:837.5px" width="6" height="3"><path d="M0 0H6L3 3Z" fill="#000"/></svg>
<svg style="left:1318px;top:826px" width="24" height="24" viewBox="0 0 24 24"><path d="M6 16L18 9" stroke="#444" stroke-width="2"/></svg>
<svg style="left:1345px;top:837.5px" width="6" height="3"><path d="M0 0H6L3 3Z" fill="#000"/></svg>
<svg style="left:1355px;top:826px" width="24" height="24" viewBox="0 0 24 24"><path d="M2 12L12 7L22 12L12 17Z" fill="#777" stroke="#333" stroke-width="0.7"/><path d="M7 9.5L17 14.5M17 9.5L7 14.5" stroke="#333" stroke-width="0.6"/></svg>
<svg style="left:1383px;top:837.5px" width="6" height="3"><path d="M0 0H6L3 3Z" fill="#000"/></svg>
<svg style="left:1393px;top:826px" width="24" height="24" viewBox="0 0 24 24"><path d="M2 11L12 6L22 11L12 16Z" fill="#8a90e8" stroke="#2a3090" stroke-width="0.7"/><path d="M2 11L12 16V19L2 14Z" fill="#4a50c0"/><path d="M22 11L12 16V19L22 14Z" fill="#5a60d0"/></svg>
<svg style="left:1421px;top:837.5px" width="6" height="3"><path d="M0 0H6L3 3Z" fill="#000"/></svg>
<svg style="left:1431px;top:826px" width="24" height="24" viewBox="0 0 24 24"><path d="M5 8L10 6V11L5 13ZM13 6L18 4V9L13 11ZM5 16L10 14V19L5 21ZM13 14L18 12V17L13 19Z" fill="#6a70b8" stroke="#3a3e78" stroke-width="0.5"/></svg>
<svg style="left:1460px;top:826px" width="24" height="24" viewBox="0 0 24 24"><rect x="3" y="3" width="18" height="13" rx="1" fill="#2a88e0" stroke="#223" stroke-width="1.2"/><path d="M4 4H20V9Q12 12 4 8Z" fill="#6ab8f8"/><rect x="10" y="16" width="4" height="3" fill="#444"/><rect x="7" y="19" width="10" height="2" fill="#333"/></svg>
<svg style="left:1492px;top:828px" width="3" height="22"><rect x="0.4" y="0.5" width="2" height="2" fill="#333"/><rect x="0.4" y="6.7" width="2" height="2" fill="#333"/><rect x="0.4" y="12.9" width="2" height="2" fill="#333"/><rect x="0.4" y="19.1" width="2" height="2" fill="#333"/></svg>
<svg style="left:1500px;top:826px" width="24" height="24" viewBox="0 0 24 24"><path d="M12 2L15 9L22.5 9.5L16.8 14.3L18.7 21.5L12 17.5L5.3 21.5L7.2 14.3L1.5 9.5L9 9Z" fill="#f8c020" stroke="#c89010" stroke-width="0.8"/></svg>
<svg style="left:1040px;top:225px" width="820" height="100" viewBox="1040 225 820 100"><text x="1066" y="300.500" font-family="'Liberation Sans','Noto Sans CJK SC',sans-serif" font-size="72" fill="#fff" fill-opacity="0.27" textLength="199" lengthAdjust="spacingAndGlyphs">bilibili</text><text x="1266" y="299" font-family="'Liberation Sans','Noto Sans CJK SC',sans-serif" font-size="70" fill="#fff" fill-opacity="0.27">：</text><text x="1338" y="299" font-family="'Liberation Sans','Noto Sans CJK SC',sans-serif" font-size="70" fill="#fff" fill-opacity="0.27" textLength="484" lengthAdjust="spacing">联创助学云课堂</text></svg>
<div style="left:538px;top:1040px;width:48px;height:40px;background:#3f484f"></div>
<div style="left:395px;top:1077.5px;width:40px;height:2.5px;background:#76b9ed"></div>
<div style="left:538px;top:1077.5px;width:48px;height:2.5px;background:#76b9ed"></div>
<div style="left:591px;top:1077.5px;width:36px;height:2.5px;background:#76b9ed"></div>
<div style="left:628px;top:1077.5px;width:3px;height:2.5px;background:#76b9ed"></div>
<div style="left:640px;top:1077.5px;width:40px;height:2.5px;background:#76b9ed"></div>
<svg style="left:14px;top:1048px" width="24" height="24"><path d="M1 1H10V10H1ZM11.5 1H20.5V10H11.5ZM1 11.5H10V20.5H1ZM11.5 11.5H20.5V20.5H11.5Z" fill="#7a8088" transform="translate(1 1) skewY(-6)"/></svg>
<div style="left:4px;top:1052px;width:147px;height:24px;background:#12161a;opacity:0.93"></div>
<svg style="left:8px;top:1054px" width="40" height="22"><rect x="5" y="2" width="5" height="11" rx="2.5" fill="#e8e8e8"/><path d="M3 9Q3 15 7.5 15Q12 15 12 9M7.5 15V19M5 19H10" stroke="#e8e8e8" stroke-width="1.2" fill="none"/><rect x="21" y="5" width="15" height="11" rx="2" fill="#fff"/><path d="M25 12Q28.500 7 32 12" stroke="#222" stroke-width="1.3" fill="none"/><rect x="26" y="17" width="5" height="1.6" fill="#fff"/></svg>
<svg style="left:46px;top:1053px" width="104" height="22" viewBox="46 1053 104 22"><text x="48" y="1069.300" font-family="'Liberation Sans','Noto Sans CJK SC',sans-serif" font-size="14" fill="#fff" textLength="98" lengthAdjust="spacing">周文君正在共享</text></svg>
<svg style="left:158px;top:1050px" width="20" height="20"><path d="M2.5 3V1.5H13.500V3M2.5 17V18.5H13.500V17" stroke="#fff" stroke-width="1.2" fill="none"/><rect x="2.5" y="5.5" width="11" height="9" fill="none" stroke="#fff" stroke-width="1.3"/><path d="M16.500 2V5M16.500 8V12.5M16.500 15V18" stroke="#fff" stroke-width="1.5"/></svg>
<svg style="left:204px;top:1046px" width="28" height="28" viewBox="0 0 28 28"><circle cx="14" cy="14" r="12" fill="#1a8ad8"/><path d="M3 17Q1 6 12 3Q22 1.500 25.500 11Q26 15 21 15.500H13Q14 10 19 11Q15 7 10 9.500Q5 12 7 19Q9 25 17 25.500Q8 27 3 17Z" fill="#3ad8a0"/><path d="M13 15.500H21Q26 15 25.500 11Q27 19 20 24Q14 27 9 22Q14 25 18 21Q14 21 13 15.500Z" fill="#0a58b8"/></svg>
<svg style="left:253px;top:1046px" width="28" height="28" viewBox="0 0 28 28"><path d="M3 5H11L13 7.500H25V10H3Z" fill="#e8a820"/><rect x="3" y="9" width="22" height="14" fill="#f8cc50"/><path d="M8 23V16H20V23H17V19H11V23Z" fill="#4a9ae8"/></svg>
<svg style="left:302px;top:1046px" width="28" height="28" viewBox="0 0 28 28"><path d="M9 9Q9 2.500 14 2.500Q19 2.500 19 9" stroke="#fff" stroke-width="1.5" fill="none"/><path d="M3 8H25L24 25H4Z" fill="#fff"/><rect x="9" y="11" width="4.500" height="4.500" fill="#f04820"/><rect x="14.500" y="11" width="4.500" height="4.500" fill="#7ab820"/><rect x="9" y="16.500" width="4.500" height="4.500" fill="#20a0e8"/><rect x="14.500" y="16.500" width="4.500" height="4.500" fill="#f8b820"/></svg>
<svg style="left:352px;top:1046px" width="28" height="28" viewBox="0 0 28 28"><path d="M2 11L14 4L26 11V23H2Z" fill="#fff"/><path d="M2 11L20 16L12 23" fill="#1f2931" opacity="0.85"/></svg>
<svg style="left:401px;top:1046px" width="28" height="28" viewBox="0 0 28 28"><path d="M2 6H10L13 16L15.500 10H20L17.500 16L19 19L23 6H27L21 24H17L15 19.500L13 24H9Z" fill="#e83820"/></svg>
<svg style="left:450px;top:1046px" width="28" height="28" viewBox="0 0 28 28"><circle cx="14" cy="14" r="11.500" fill="#6ac030"/><circle cx="14" cy="14" r="9.500" fill="none" stroke="#fff" stroke-width="1.600"/><path d="M20 17Q17 21 13 20Q8.500 19 8.500 14Q9 8.500 14 8Q19.500 8 19.500 14H8.500" stroke="#fff" stroke-width="2.500" fill="none"/><path d="M3 20Q12 6 25 3" stroke="#d8f0c0" stroke-width="1" fill="none"/></svg>
<svg style="left:499px;top:1046px" width="28" height="28" viewBox="0 0 28 28"><rect x="2" y="2" width="12" height="12" rx="4" fill="#20c890"/><rect x="14" y="2" width="12" height="12" rx="4" fill="#30a8f0"/><rect x="2" y="14" width="12" height="12" rx="4" fill="#f8b040"/><rect x="14" y="14" width="12" height="12" rx="4" fill="#f87868"/><circle cx="14" cy="14" r="3" fill="#1f2931"/></svg>
<svg style="left:548px;top:1046px" width="28" height="28" viewBox="0 0 28 28"><rect x="3" y="3" width="22" height="22" rx="5" fill="#7a8ab8"/><g fill="#e8ecf8" transform="rotate(-25 14 14)"><rect x="5" y="6" width="5" height="4" rx="1"/><rect x="12" y="6" width="5" height="4" rx="1"/><rect x="19" y="6" width="5" height="4" rx="1"/><rect x="5" y="12.500" width="5" height="4" rx="1"/><rect x="12" y="12.500" width="5" height="4" rx="1"/><rect x="19" y="12.500" width="5" height="4" rx="1"/><rect x="8" y="19" width="5" height="4" rx="1"/><rect x="15" y="19" width="5" height="4" rx="1"/></g></svg>
<svg style="left:597px;top:1046px" width="28" height="28" viewBox="0 0 28 28"><rect x="2" y="2" width="24" height="24" rx="4" fill="#1868e0"/><path d="M5 18L10 11L14 16L18 11L23 18H18L16 15.500L14 18Z" fill="#fff"/><path d="M5 18L8 14L10 18Z" fill="#a0c8ff"/></svg>
<svg style="left:646px;top:1046px" width="28" height="28" viewBox="0 0 28 28"><rect x="2" y="2" width="12" height="12" fill="#a8d0f0"/><rect x="14" y="2" width="12" height="12" fill="#a8d8a0"/><rect x="2" y="14" width="12" height="12" fill="#f8d8a0"/><rect x="14" y="14" width="12" height="12" fill="#c8c8c8"/><path d="M5 3L15 15" stroke="#d04030" stroke-width="1.500"/><circle cx="15" cy="15" r="2.500" fill="#e04020"/><path d="M16 16V27L18.500 24.500L20.500 28.500L22 27.800L20 24H23.500Z" fill="#fff" stroke="#000" stroke-width="0.800"/></svg>
<svg style="left:1583px;top:1052px" width="14" height="17"><rect x="3" y="0.500" width="7" height="4" fill="#e8e8e8"/><rect x="1" y="4" width="11" height="12" rx="1.500" fill="#58b030"/><path d="M6.500 6V13M4 9.500L6.500 13L9 9.500" stroke="#e8ffe0" stroke-width="1.100" fill="none"/></svg>
<div class="t" style="left:1629px;top:1044px;font-size:13px;color:#fff;">20%</div>
<svg style="left:1616px;top:1058px" width="54" height="18" viewBox="1616 1058 54 18"><text x="1618.500" y="1071.500" font-family="'Liberation Sans','Noto Sans CJK SC',sans-serif" font-size="11.500" fill="#fff" textLength="47" lengthAdjust="spacing">内存占用</text></svg>
<svg style="left:1681px;top:1055px" width="14" height="9"><path d="M1.500 7.500L7 2L12.500 7.500" stroke="#fff" stroke-width="1.300" fill="none"/></svg>
<svg style="left:1703px;top:1051px" width="18" height="18"><circle cx="9" cy="9" r="8" fill="#f0d820"/><path d="M2 12Q9 16 16 12Q14 17 9 17Q4 17 2 12Z" fill="#6ab030"/><path d="M9 4.500V13M4.800 8.800H13.200" stroke="#2a8a20" stroke-width="2"/></svg>
<svg style="left:1728px;top:1052px" width="18" height="18"><path d="M2 14Q3 4 15 3M5.500 15Q6.500 8 15 7M9 15.500Q10 11 15 11" stroke="#fff" stroke-width="1.400" fill="none"/><circle cx="13.500" cy="15" r="1.500" fill="#fff"/></svg>
<svg style="left:1752px;top:1050px" width="15" height="22"><rect x="4" y="1" width="7" height="12" rx="3.500" fill="#fff"/><path d="M1.500 9Q1.500 16 7.500 16Q13.500 16 13.500 9M7.500 16V20M4.500 20.500H10.500" stroke="#fff" stroke-width="1.300" fill="none"/></svg>
<svg style="left:1771px;top:1049px" width="20" height="20" viewBox="1771 1049 20 20"><text x="1774" y="1065" font-family="'Liberation Sans','Noto Sans CJK SC',sans-serif" font-size="14" fill="#fff">中</text></svg>
<div class="t" style="left:1815px;top:1044px;font-size:13px;color:#fff;">21:04</div>
<svg style="left:1878px;top:1051px" width="19" height="14"><path d="M1 1H18V11H8L5 13.500V11H1Z" fill="#e8e8e8"/><path d="M4 4.500H15M4 7.500H15" stroke="#1f2931" stroke-width="1"/></svg>
<div style="left:1784px;top:1056px;width:125px;height:24px;background:#11151a;opacity:0.9"></div>
<div class="t" style="left:1790px;top:1060px;font-size:13px;color:#fff;letter-spacing:-0.1px">2025/04/07 21:04:27</div>
<div style="left:1915px;top:1040px;width:1px;height:40px;background:#6a7278"></div>
<svg style="left:660px;top:1008px" width="710" height="72" viewBox="660 1008 710 72"><text x="674" y="1063" font-family="'Liberation Sans','Noto Sans CJK SC',sans-serif" font-size="52" font-weight="bold" fill="#f8d820" stroke="#000" stroke-width="9" stroke-linejoin="round" paint-order="stroke fill" textLength="680" lengthAdjust="spacing">评论区置顶获取配套课程资料</text></svg>
<svg style="left:1127px;top:483px" width="16" height="22"><path d="M2 1.500V16L5.500 12.800L8 18.500L10.300 17.500L7.800 12H12.500Z" fill="#fff" stroke="#333" stroke-width="0.900"/></svg>
<svg style="left:3px;top:4px" width="15" height="14"><rect x="0.5" y="0.5" width="13" height="12.5" rx="3" fill="#8093b2"/><g fill="#dfe8f4" transform="rotate(-25 7 7)"><rect x="1.5" y="2.5" width="3" height="2.4" rx="0.8"/><rect x="6" y="2" width="3.4" height="2.6" rx="0.8"/><rect x="10.3" y="2.5" width="3" height="2.4" rx="0.8"/><rect x="3" y="6" width="3.4" height="2.6" rx="0.8"/><rect x="7.6" y="6" width="3.4" height="2.6" rx="0.8"/><rect x="1.5" y="9.7" width="3" height="2.4" rx="0.8"/><rect x="5.800" y="9.7" width="3.4" height="2.6" rx="0.8"/><rect x="10.3" y="9.5" width="3" height="2.4" rx="0.8"/></g></svg>
<div style="left:1851px;top:5px;width:52px;height:544px;background:#f0f0f0;box-shadow:0 0 4px rgba(0,0,0,0.35)"><div style="left:0;top:0;width:52px;height:26px;background:#fff"></div><div class="t" style="left:3px;top:7px;font-size:12px;color:#a8a8a8">Poi...</div><div style="left:32px;top:3px;width:19px;height:19px;background:#e2e2e2"></div><div style="left:1px;top:26px;width:50px;height:26px;background:#f0f0f0;border-top:1px solid #fff;border-left:1px solid #fff;border-right:2px solid #6a6a6a;border-bottom:2px solid #6a6a6a;outline:1px solid #8a8a8a"></div><svg style="left:10px;top:30px" width="34" height="18" viewBox="0 0 34 18"><text x="3.500" y="14" font-family="'Liberation Sans','Noto Sans CJK SC',sans-serif" font-size="13" fill="#000" textLength="26.500" lengthAdjust="spacing">退出</text></svg><div style="left:1px;top:54px;width:24px;height:24px;background:#f8f8f8;border-top:1px solid #9a9a9a;border-left:1px solid #9a9a9a;border-right:1px solid #fff;border-bottom:1px solid #fff"></div><svg style="left:0;top:54px" width="52" height="52"><circle cx="14" cy="13" r="1.800" fill="#777770"/><circle cx="38" cy="11.500" r="4" fill="#777770"/><circle cx="13" cy="35.500" r="6" fill="#777770"/><circle cx="38" cy="35.500" r="8" fill="#777770"/></svg><div style="left:3px;top:106px;width:46px;height:1px;background:#b0b0b0"></div><div style="left:26px;top:111px;width:24px;height:24px;border-top:1px solid #9a9a9a;border-left:1px solid #9a9a9a;border-right:1px solid #fff;border-bottom:1px solid #fff;background:#f8f8f8"></div><div style="left:4.500px;top:114.5px;width:18px;height:17.500px;background:linear-gradient(135deg,#fff 0%,#ff1e0a 70%)"></div><div style="left:29.500px;top:114.5px;width:18px;height:17.500px;background:#ff1e0a"></div><div style="left:4.500px;top:138px;width:18px;height:17.500px;background:linear-gradient(135deg,#fff 0%,#ffee00 70%)"></div><div style="left:29.500px;top:138px;width:18px;height:17.500px;background:#ffee00"></div><div style="left:4.500px;top:162px;width:18px;height:17.500px;background:linear-gradient(135deg,#fff 0%,#00d21e 70%)"></div><div style="left:29.500px;top:162px;width:18px;height:17.500px;background:#00d21e"></div><div style="left:4.500px;top:186.5px;width:18px;height:17.500px;background:linear-gradient(135deg,#fff 0%,#0014ff 70%)"></div><div style="left:29.500px;top:186.5px;width:18px;height:17.500px;background:#0014ff"></div><div style="left:4.500px;top:210.5px;width:18px;height:17.500px;background:#fff"></div><div style="left:29.500px;top:210.5px;width:18px;height:17.500px;background:#000000"></div><div style="left:3px;top:235px;width:46px;height:1px;background:#b0b0b0"></div><div style="left:1px;top:239px;width:24px;height:26px;background:#f8f8f8;border-top:1px solid #9a9a9a;border-left:1px solid #9a9a9a;border-right:1px solid #fff;border-bottom:1px solid #fff"></div><svg style="left:3px;top:242.5px" width="20" height="20" viewBox="0 0 20 20"><path d="M3 10Q6 5 9.500 10Q13 15 17 10" stroke="#000" stroke-width="1.100" fill="none"/></svg><svg style="left:28px;top:242.5px" width="20" height="20" viewBox="0 0 20 20"><path d="M4 14L12 5L16 7L9 16H5Z" fill="#fff" stroke="#222" stroke-width="1"/><path d="M4 14L7 11L11 13.500L9 16H5Z" fill="#aaa" stroke="#222" stroke-width="0.800"/></svg><svg style="left:3px;top:264px" width="20" height="20" viewBox="0 0 20 20"><path d="M3 14L17 6" stroke="#000" stroke-width="1.100"/></svg><svg style="left:28px;top:264px" width="20" height="20" viewBox="0 0 20 20"><path d="M2 10H17M13 6.500L17 10L13 13.500" stroke="#000" stroke-width="1.100" fill="none"/></svg><svg style="left:3px;top:289px" width="20" height="20" viewBox="0 0 20 20"><rect x="2.500" y="5.500" width="15" height="9" fill="#fff" stroke="#000" stroke-width="1.100"/></svg><svg style="left:28px;top:289px" width="20" height="20" viewBox="0 0 20 20"><rect x="2.500" y="5.500" width="15" height="9" fill="#a6a6a6"/></svg><svg style="left:3px;top:313px" width="20" height="20" viewBox="0 0 20 20"><ellipse cx="10" cy="10" rx="7.500" ry="4.500" fill="#fff" stroke="#000" stroke-width="1.100"/></svg><svg style="left:28px;top:313px" width="20" height="20" viewBox="0 0 20 20"><ellipse cx="10" cy="10" rx="7.500" ry="4.500" fill="#a6a6a6"/></svg><svg style="left:3px;top:337px" width="20" height="20" viewBox="0 0 20 20"><path d="M2 10H18M5.500 6.500L2 10L5.500 13.500M14.500 6.500L18 10L14.500 13.500" stroke="#000" stroke-width="1.100" fill="none"/></svg><svg style="left:28px;top:337px" width="20" height="20" viewBox="0 0 20 20"><path d="M4 16L10 3L16 16M6.300 11.500H13.700" stroke="#000" stroke-width="1.300" fill="none"/></svg><svg style="left:3px;top:361.5px" width="20" height="20" viewBox="0 0 20 20"><path d="M4 10.500L8 15L16 5" stroke="#28a028" stroke-width="1.800" fill="none"/></svg><svg style="left:28px;top:361.5px" width="20" height="20" viewBox="0 0 20 20"><path d="M6 6L14 14M14 6L6 14" stroke="#d82818" stroke-width="2.200"/></svg><svg style="left:3px;top:385px" width="20" height="20" viewBox="0 0 20 20"><path d="M14.500 1V18M2 15.500H19" stroke="#555" stroke-width="1"/><rect x="4" y="5" width="10.500" height="10.500" fill="none" stroke="#333" stroke-width="1" stroke-dasharray="1.500 1.500"/></svg><svg style="left:28px;top:385px" width="20" height="20" viewBox="0 0 20 20"><rect x="2.500" y="3.500" width="11" height="9" fill="#f4f4ff" stroke="#446" stroke-width="1"/><path d="M5.500 8H10.500M8 5.500V10.500" stroke="#446" stroke-width="1"/><path d="M13 12.500L17.500 17" stroke="#987" stroke-width="2"/></svg><div style="left:3px;top:410px;width:46px;height:1px;background:#b0b0b0"></div><svg style="left:3px;top:416.5px" width="20" height="20" viewBox="0 0 20 20"><path d="M10 3.500V16.500M3.500 10H16.500" stroke="#9a9ad8" stroke-width="3"/></svg><svg style="left:28px;top:416.5px" width="20" height="20" viewBox="0 0 20 20"><path d="M3.500 10H16.500" stroke="#9a9ad8" stroke-width="3"/></svg><div style="left:3px;top:442px;width:46px;height:1px;background:#b0b0b0"></div><svg style="left:3px;top:449.5px" width="20" height="20" viewBox="0 0 20 20"><path d="M5 8Q10 4 14 7Q17 10 13 14H9" stroke="#444" stroke-width="1.400" fill="none"/><path d="M3 6L4.500 11.500L9 8.500Z" fill="#444"/></svg><svg style="left:28px;top:449.5px" width="20" height="20" viewBox="0 0 20 20"><path d="M4 5.500H16M7.500 5.500V3.500H12.500V5.500" stroke="#222" stroke-width="1.300" fill="none"/><path d="M5 7H15L14 18H6Z" fill="#666" stroke="#222" stroke-width="0.800"/><path d="M8 8.500V16.500M10 8.500V16.500M12 8.500V16.500" stroke="#ddd" stroke-width="0.800"/></svg><svg style="left:3px;top:473px" width="20" height="20" viewBox="0 0 20 20"><path d="M4.500 2.500H12L15.500 6V17.500H4.500Z" fill="#fff" stroke="#222" stroke-width="1.100"/><path d="M12 2.500V6H15.500" fill="none" stroke="#222" stroke-width="0.900"/></svg><svg style="left:28px;top:473px" width="20" height="20" viewBox="0 0 20 20"><path d="M3 2.500H9L11 4.500V11H3Z" fill="#e8e8ff" stroke="#336" stroke-width="0.900"/><path d="M8 7.500H14L16.500 10V17.500H8Z" fill="#e8e8ff" stroke="#336" stroke-width="0.900"/><path d="M10 11.500H14.500M10 13.500H14.500M10 15.500H14.500M4.500 5.500H8M4.500 7.500H7" stroke="#336" stroke-width="0.700"/></svg><svg style="left:3px;top:496.5px" width="20" height="20" viewBox="0 0 20 20"><path d="M6 8L8 2.500H15L13.500 8" fill="#fff" stroke="#336" stroke-width="0.900"/><path d="M2 9Q2 8 3 8H16Q17 8 17 9V14H2Z" fill="#8a8ec8" stroke="#336" stroke-width="0.900"/><path d="M4 14H15V17H4Z" fill="#c8cae8" stroke="#336" stroke-width="0.800"/></svg><svg style="left:28px;top:496.5px" width="20" height="20" viewBox="0 0 20 20"><path d="M3 3H15.500L17 4.500V17H3Z" fill="#5a5a30" stroke="#222" stroke-width="0.900"/><rect x="5.500" y="3.500" width="8.500" height="5" fill="#d8d8e8"/><rect x="6" y="11.500" width="8" height="5.500" fill="#888868"/><rect x="7.500" y="12.500" width="2" height="3.500" fill="#222"/></svg><svg style="left:3px;top:520.5px" width="20" height="20" viewBox="0 0 20 20"><rect x="4.500" y="5.500" width="12" height="9.500" fill="#e4e4ff" stroke="#336" stroke-width="1"/><path d="M6.500 12H10M6.500 9.500H8.500" stroke="#336" stroke-width="0.800"/><rect x="11.500" y="7.500" width="3" height="2.500" fill="#88a"/><path d="M1 14.500H2.500M1 12.500H2" stroke="#555" stroke-width="0.700"/></svg><svg style="left:28px;top:520.5px" width="20" height="20" viewBox="0 0 20 20"><circle cx="10" cy="10" r="7.500" fill="#28a0e0" stroke="#1870b0" stroke-width="0.800"/><rect x="9" y="8.500" width="2" height="6" fill="#fff"/><circle cx="10" cy="5.800" r="1.300" fill="#fff"/></svg></div>
<div style="left:1910px;top:270px;width:7.5px;height:10.5px;background:#18a8f0;border-radius:0 0 4px 4px"></div>
<div style="left:1916px;top:77px;width:1px;height:938px;background:#000"></div>
</body></html>
